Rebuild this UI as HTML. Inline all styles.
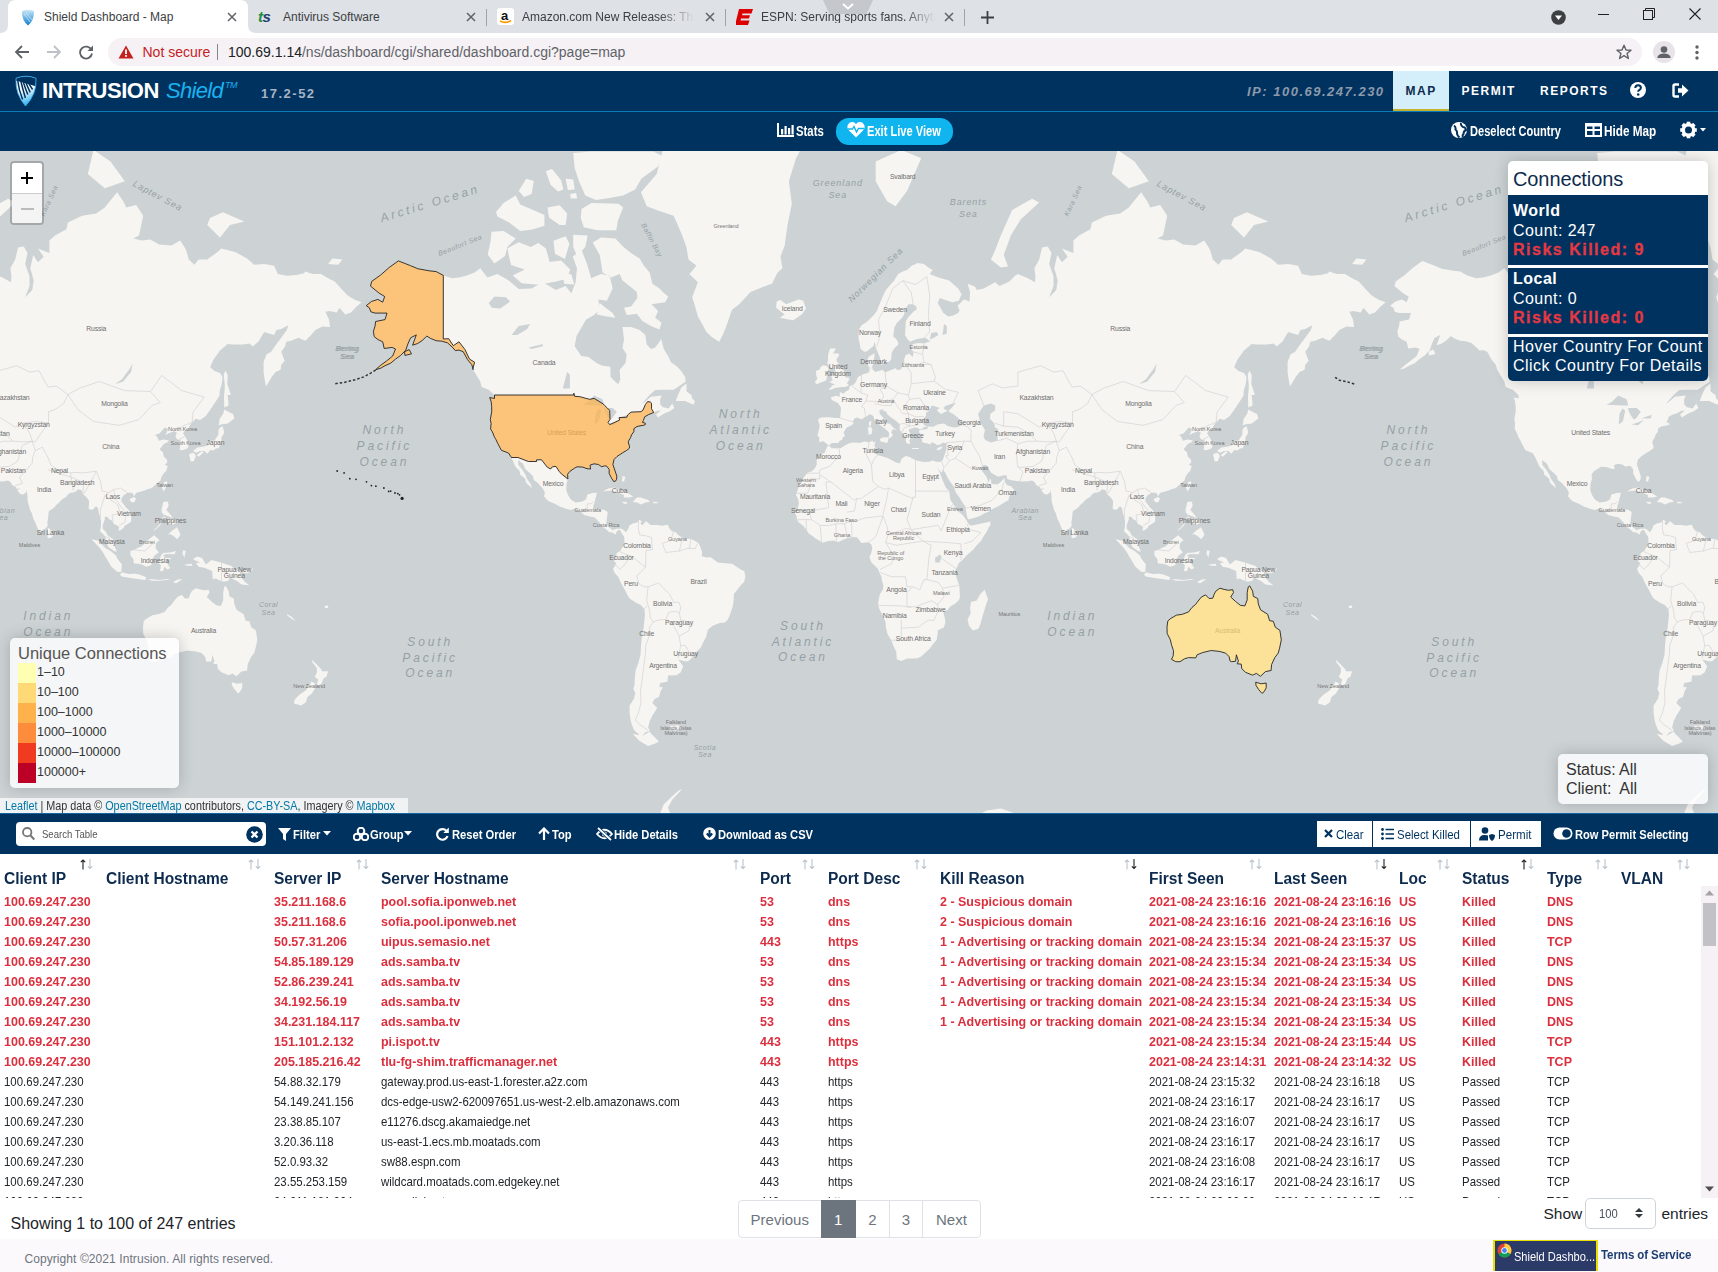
<!DOCTYPE html>
<html><head><meta charset="utf-8">
<style>
*{box-sizing:border-box;margin:0;padding:0}
html,body{width:1718px;height:1272px;overflow:hidden;background:#fff;font-family:"Liberation Sans",sans-serif}
.a{position:absolute}
.t{position:absolute;white-space:nowrap;line-height:1}
.b{font-weight:bold}
</style></head><body>
<div class="a" style="left:0px;top:0px;width:1718px;height:33px;background:#dee1e6"></div>
<svg class="a" style="left:0;top:0" width="256" height="34" viewBox="0 0 256 34"><path d="M0,33 Q8,33 8,25 L8,8 Q8,0 16,0 L240,0 Q248,0 248,8 L248,25 Q248,33 256,33 L256,34 L0,34Z" fill="#fff"/></svg>
<svg class="a" style="left:21px;top:9px;" width="14" height="17" viewBox="0 0 14 17"><defs><linearGradient id="fg" x1="0" y1="0" x2="0" y2="1"><stop offset="0" stop-color="#cfe9f7"/><stop offset="1" stop-color="#0a7fd0"/></linearGradient></defs><path d="M1,2 Q7,-0.5 13,2 Q13.5,11 7,16.5 Q0.5,11 1,2Z" fill="url(#fg)"/><path d="M3,5 Q6,8 9,13 M5,4 Q8,7 11,11" stroke="#fff" stroke-width="0.8" fill="none" opacity="0.7"/></svg>
<div class="t " style="left:44.0px;top:11.14px;font-size:12px;color:#3c4043">Shield Dashboard - Map</div>
<svg class="a" style="left:227px;top:12.3px;" width="10" height="10" viewBox="0 0 10 10"><path d="M1,1 L9,9 M9,1 L1,9" stroke="#5f6368" stroke-width="1.5"/></svg>
<div class="t b" style="left:258px;top:9px;font-size:15px;font-style:italic;letter-spacing:-0.5px"><span style="color:#1b8f3e">t</span><span style="color:#1d3d6b">s</span></div>
<div class="t " style="left:283.0px;top:11.14px;font-size:12px;color:#3c4043">Antivirus Software</div>
<svg class="a" style="left:466px;top:12.3px;" width="10" height="10" viewBox="0 0 10 10"><path d="M1,1 L9,9 M9,1 L1,9" stroke="#5f6368" stroke-width="1.5"/></svg>
<div class="a" style="left:486px;top:9px;width:1px;height:17px;background:#a0a4a8"></div>
<svg class="a" style="left:497px;top:8px;" width="17" height="17" viewBox="0 0 17 17"><rect width="17" height="17" rx="3" fill="#fff"/><text x="4" y="12" font-family="Liberation Sans" font-weight="bold" font-size="13" fill="#111">a</text><path d="M3,13 Q8.5,16 14,12.5" stroke="#f90" stroke-width="1.6" fill="none"/></svg>
<div class="t" style="left:522px;top:11.14px;font-size:12px;color:#3c4043;width:172px;overflow:hidden;-webkit-mask-image:linear-gradient(90deg,#000 80%,transparent)">Amazon.com New Releases: The Best</div>
<svg class="a" style="left:705px;top:12.3px;" width="10" height="10" viewBox="0 0 10 10"><path d="M1,1 L9,9 M9,1 L1,9" stroke="#5f6368" stroke-width="1.5"/></svg>
<div class="a" style="left:725px;top:9px;width:1px;height:17px;background:#a0a4a8"></div>
<svg class="a" style="left:736px;top:9px;" width="17" height="16" viewBox="0 0 17 16"><path d="M3,0 L17,0 L15.5,4.5 L6.5,4.5 L6,6.3 L14,6.3 L13,9.5 L5,9.5 L4.5,11.5 L13.5,11.5 L12,16 L-1,16Z" fill="#d00"/></svg>
<div class="t" style="left:761px;top:11.14px;font-size:12px;color:#3c4043;width:174px;overflow:hidden;-webkit-mask-image:linear-gradient(90deg,#000 82%,transparent)">ESPN: Serving sports fans. Anytime.</div>
<svg class="a" style="left:944px;top:12.3px;" width="10" height="10" viewBox="0 0 10 10"><path d="M1,1 L9,9 M9,1 L1,9" stroke="#5f6368" stroke-width="1.5"/></svg>
<div class="a" style="left:964px;top:9px;width:1px;height:17px;background:#a0a4a8"></div>
<svg class="a" style="left:981px;top:11px;" width="13" height="13" viewBox="0 0 13 13"><path d="M6.5,0 V13 M0,6.5 H13" stroke="#3c4043" stroke-width="1.8"/></svg>
<svg class="a" style="left:823px;top:0px;" width="50" height="14" viewBox="0 0 50 14"><path d="M0,0 L50,0 L44,13 Q43,14 41,14 L9,14 Q7,14 6,13Z" fill="#c4c7cc"/><path d="M20,4 L25,8.5 L30,4" stroke="#fff" stroke-width="1.8" fill="none"/></svg>
<svg class="a" style="left:1551px;top:10px;" width="15" height="15" viewBox="0 0 15 15"><circle cx="7.5" cy="7.5" r="7.3" fill="#3c4043"/><path d="M4,5.5 L11,5.5 L7.5,10Z" fill="#fff"/></svg>
<div class="a" style="left:1598px;top:14px;width:11px;height:1px;background:#202124"></div>
<svg class="a" style="left:1643px;top:8px;" width="12" height="12" viewBox="0 0 12 12"><rect x="0.5" y="2.5" width="9" height="9" fill="none" stroke="#202124"/><path d="M2.5,2.5 V0.5 H11.5 V9.5 H9.5" fill="none" stroke="#202124"/></svg>
<svg class="a" style="left:1689px;top:8px;" width="12" height="12" viewBox="0 0 12 12"><path d="M0.5,0.5 L11.5,11.5 M11.5,0.5 L0.5,11.5" stroke="#202124" stroke-width="1.1"/></svg>
<div class="a" style="left:0px;top:33px;width:1718px;height:38px;background:#fff"></div>
<svg class="a" style="left:14px;top:44px;" width="16" height="16" viewBox="0 0 16 16"><path d="M15,8 H2 M8,2 L2,8 L8,14" stroke="#5f6368" stroke-width="1.8" fill="none"/></svg>
<svg class="a" style="left:46px;top:44px;" width="16" height="16" viewBox="0 0 16 16"><path d="M1,8 H14 M8,2 L14,8 L8,14" stroke="#bdc1c6" stroke-width="1.8" fill="none"/></svg>
<svg class="a" style="left:78px;top:44px;" width="16" height="16" viewBox="0 0 16 16"><path d="M13.5,6 A6,6 0 1 0 14,9.5" stroke="#5f6368" stroke-width="1.8" fill="none"/><path d="M15,1.5 V7 H9.5Z" fill="#5f6368"/></svg>
<div class="a" style="left:108px;top:38px;width:1534px;height:28px;background:#f5f1f5;border-radius:14px"></div>
<svg class="a" style="left:118px;top:45px;" width="16" height="14" viewBox="0 0 16 14"><path d="M8,0.5 L15.5,13.5 H0.5Z" fill="#c5221f"/><rect x="7.1" y="4.5" width="1.8" height="4.5" fill="#fff"/><rect x="7.1" y="10" width="1.8" height="1.8" fill="#fff"/></svg>
<div class="t " style="left:142.5px;top:45.25px;font-size:14px;color:#c5221f">Not secure</div>
<div class="a" style="left:217px;top:44px;width:1px;height:16px;background:#80868b"></div>
<div class="t " style="left:228.0px;top:45.25px;font-size:14px;color:#5f6368"><span style="color:#202124">100.69.1.14</span>/ns/dashboard/cgi/shared/dashboard.cgi?page=map</div>
<svg class="a" style="left:1616px;top:44px;" width="16" height="16" viewBox="0 0 16 16"><path d="M8,1.2 L10,6 L15,6.3 L11.1,9.5 L12.4,14.5 L8,11.7 L3.6,14.5 L4.9,9.5 L1,6.3 L6,6Z" fill="none" stroke="#5f6368" stroke-width="1.4" stroke-linejoin="round"/></svg>
<svg class="a" style="left:1653px;top:41px;" width="22" height="22" viewBox="0 0 22 22"><circle cx="11" cy="11" r="11" fill="#e8e3e8"/><circle cx="11" cy="8.5" r="3.3" fill="#5f6368"/><path d="M4.5,16 Q5.5,12.5 11,12.5 Q16.5,12.5 17.5,16 L17.5,17 H4.5Z" fill="#5f6368"/></svg>
<svg class="a" style="left:1694px;top:45px;" width="6" height="15" viewBox="0 0 6 15"><circle cx="3" cy="2" r="1.7" fill="#5f6368"/><circle cx="3" cy="7.5" r="1.7" fill="#5f6368"/><circle cx="3" cy="13" r="1.7" fill="#5f6368"/></svg>
<div class="a" style="left:0px;top:71px;width:1718px;height:80px;background:#00325f"></div>
<div class="a" style="left:0px;top:111px;width:1718px;height:1px;background:#0a7ab8"></div>
<svg class="a" style="left:15px;top:75px;" width="23" height="32" viewBox="0 0 23 32"><defs><linearGradient id="lg1" x1="0" y1="0" x2="0.3" y2="1"><stop offset="0" stop-color="#fff"/><stop offset="0.55" stop-color="#f4fbff"/><stop offset="1" stop-color="#2fb0f0"/></linearGradient><clipPath id="shc"><path d="M1,3.2 Q11,-0.8 21,3.2 Q22,19 10.5,31 Q0,19 1,3.2Z"/></clipPath></defs><g clip-path="url(#shc)"><rect width="23" height="32" fill="url(#lg1)"/><path d="M0,0 H23 V12 Q14,9 0,5.5Z" fill="#00325f"/><g stroke="#00325f" stroke-width="1.5" fill="none"><path d="M2.6,5 Q4,16 7.6,24.5"/><path d="M5.8,6 Q8,15 10.4,23"/><path d="M8.3,7 Q10.5,14 12.8,19.5"/><path d="M11,7.8 Q13,13 15.2,17.3"/><path d="M14,8.6 Q15.8,12 17.6,14.5"/></g></g><path d="M1,3.2 Q11,-0.8 21,3.2 Q22,19 10.5,31 Q0,19 1,3.2Z" fill="none" stroke="#3ab4f2" stroke-width="0.9" opacity="0.9"/></svg>
<div class="t b" style="left:42.0px;top:80.38px;font-size:22px;color:#fff;letter-spacing:-0.45px">INTRUSION</div>
<div class="t " style="left:166.0px;top:80.38px;font-size:22px;color:#1ab2f0;font-style:italic;letter-spacing:-0.7px">Shield</div>
<div class="t " style="left:225.0px;top:81.38px;font-size:9px;color:#1ab2f0;font-style:italic;letter-spacing:-0.5px">TM</div>
<div class="t b" style="left:261.0px;top:87.00px;font-size:13px;color:#a8b4c3;letter-spacing:1.5px">17.2-52</div>
<div class="t b" style="left:1247.0px;top:84.50px;font-size:13px;color:#8d9aab;font-style:italic;letter-spacing:1.5px">IP: 100.69.247.230</div>
<div class="a" style="left:1393px;top:71px;width:56px;height:38px;background:#d4eefa"></div>
<div class="a" style="left:1393px;top:109px;width:56px;height:2px;background:#c7b12a"></div>
<div class="t b" style="left:1405.5px;top:84.84px;font-size:12px;color:#0d2b4e;letter-spacing:1.5px">MAP</div>
<div class="t b" style="left:1461.5px;top:84.84px;font-size:12px;color:#fff;letter-spacing:1.5px">PERMIT</div>
<div class="t b" style="left:1540.0px;top:84.84px;font-size:12px;color:#fff;letter-spacing:1.5px">REPORTS</div>
<svg class="a" style="left:1630px;top:82px;" width="16" height="16" viewBox="0 0 16 16"><circle cx="8" cy="8" r="8" fill="#fff"/><path d="M5.3,6 Q5.3,3.2 8.1,3.2 Q10.9,3.2 10.9,5.7 Q10.9,7.2 9.2,8.1 Q8.2,8.7 8.2,9.8" stroke="#00325f" stroke-width="2" fill="none"/><circle cx="8.2" cy="12.4" r="1.25" fill="#00325f"/></svg>
<svg class="a" style="left:1672px;top:83px;" width="17" height="15" viewBox="0 0 17 15"><path d="M7,1.5 H3 Q1.5,1.5 1.5,3 V12 Q1.5,13.5 3,13.5 H7" stroke="#fff" stroke-width="2.4" fill="none"/><path d="M6,5.2 H10 V1.5 L16.5,7.5 L10,13.5 V9.8 H6Z" fill="#fff"/></svg>
<svg class="a" style="left:777px;top:123px;" width="17" height="14" viewBox="0 0 17 14"><path d="M1,0 V13 H17" stroke="#fff" stroke-width="2" fill="none"/><rect x="4" y="6" width="2.2" height="5.5" fill="#fff"/><rect x="7.5" y="3" width="2.2" height="8.5" fill="#fff"/><rect x="11" y="5" width="2.2" height="6.5" fill="#fff"/><rect x="14.5" y="2" width="2.2" height="9.5" fill="#fff"/></svg>
<div class="t b" style="left:796.0px;top:123.65px;font-size:14px;transform:scaleX(0.81);transform-origin:0 0;color:#fff">Stats</div>
<div class="a" style="left:836px;top:118px;width:117px;height:26.5px;background:#10b5ef;border-radius:13px"></div>
<svg class="a" style="left:847px;top:121px;" width="18" height="17" viewBox="0 0 18 17"><path d="M9,16.5 L2,9.5 Q-0.5,7 0.8,4 Q2.5,0.5 6,1 Q8,1.3 9,3.2 Q10,1.3 12,1 Q15.5,0.5 17.2,4 Q18.5,7 16,9.5Z" fill="#fff"/><path d="M1,8 H5.5 L7,5.5 L9.5,11 L11.5,7.5 H17" stroke="#10b5ef" stroke-width="1.4" fill="none"/></svg>
<div class="t b" style="left:867.0px;top:123.65px;font-size:14px;transform:scaleX(0.794);transform-origin:0 0;color:#fff">Exit Live View</div>
<svg class="a" style="left:1451px;top:122px;" width="16" height="16" viewBox="0 0 16 16"><circle cx="8" cy="8" r="8" fill="#fff"/><path d="M3,3.5 Q5,5 4.5,7.5 Q6.5,9 6,12 Q7,14.5 8.5,15.5 M10,1 Q9.5,4 12,5 Q14.5,5 15,8 Q12.5,9 12.5,12 Q11,13.5 12,15" stroke="#00325f" stroke-width="2" fill="none"/></svg>
<div class="t b" style="left:1470.0px;top:123.65px;font-size:14px;transform:scaleX(0.79);transform-origin:0 0;color:#fff">Deselect Country</div>
<svg class="a" style="left:1585px;top:123px;" width="17" height="14" viewBox="0 0 17 14"><rect x="1" y="1" width="15" height="12" fill="none" stroke="#fff" stroke-width="2"/><path d="M1,7 H16 M8.5,1 V13" stroke="#fff" stroke-width="2"/><rect x="1" y="1" width="15" height="2.5" fill="#fff"/></svg>
<div class="t b" style="left:1604.0px;top:123.65px;font-size:14px;transform:scaleX(0.84);transform-origin:0 0;color:#fff">Hide Map</div>
<svg class="a" style="left:1680px;top:121px;" width="28" height="18" viewBox="0 0 28 18"><g transform="translate(8.5,9)"><circle r="5.2" fill="none" stroke="#fff" stroke-width="3.4"/><rect x="-1.8" y="-8.3" width="3.6" height="3.5" fill="#fff" transform="rotate(0)"/><rect x="-1.8" y="-8.3" width="3.6" height="3.5" fill="#fff" transform="rotate(45)"/><rect x="-1.8" y="-8.3" width="3.6" height="3.5" fill="#fff" transform="rotate(90)"/><rect x="-1.8" y="-8.3" width="3.6" height="3.5" fill="#fff" transform="rotate(135)"/><rect x="-1.8" y="-8.3" width="3.6" height="3.5" fill="#fff" transform="rotate(180)"/><rect x="-1.8" y="-8.3" width="3.6" height="3.5" fill="#fff" transform="rotate(225)"/><rect x="-1.8" y="-8.3" width="3.6" height="3.5" fill="#fff" transform="rotate(270)"/><rect x="-1.8" y="-8.3" width="3.6" height="3.5" fill="#fff" transform="rotate(315)"/></g><path d="M20,7 L26,7 L23,10.5Z" fill="#fff"/></svg>
<div class="a" style="left:0;top:151px;width:1718px;height:662px;overflow:hidden">
<svg width="1718" height="662" viewBox="0 0 1718 662" style="position:absolute;left:0;top:0">
<defs><path id="land" d="M366.2,154.7 371.4,150.5 377.9,148.4 382.7,151.2 384.7,145.5 378.8,141.9 370.5,135.1 371.7,130.4 380.8,123.9 389.3,116.4 398.4,109.9 410.6,114.7 417.7,117.7 429.1,119.8 436.2,120.6 443.3,124.4 451.9,127.2 459.0,126.4 466.1,124.8 474.6,121.5 480.3,117.3 487.4,126.4 497.4,123.1 508.8,129.6 518.7,138.1 531.5,137.4 542.9,131.2 555.7,138.9 565.6,135.1 571.3,142.6 575.6,131.2 577.0,117.3 572.8,105.8 581.3,98.4 587.0,112.9 591.2,127.2 601.2,123.1 609.7,124.8 612.6,137.4 606.9,149.8 598.4,148.4 599.8,158.8 594.1,164.1 586.1,168.6 581.3,176.7 576.5,185.1 574.7,195.3 581.3,205.0 588.4,206.0 596.9,212.2 602.6,214.7 610.3,215.7 610.6,225.9 614.0,229.6 618.3,233.3 620.3,228.2 619.7,218.7 625.4,212.2 626.8,203.4 622.5,196.9 624.0,188.5 622.5,176.1 631.1,176.1 639.6,179.1 645.3,183.9 646.7,193.6 651.0,198.0 655.2,196.4 659.5,190.8 661.2,188.0 663.8,198.0 668.6,206.0 670.9,211.2 676.6,215.2 680.8,219.6 685.1,225.9 685.7,230.5 681.7,233.3 673.7,238.7 663.8,238.7 655.2,239.1 649.6,244.0 645.3,248.7 641.9,252.9 645.9,250.0 651.0,245.7 661.5,244.4 660.1,248.7 660.1,253.3 662.9,256.2 668.6,257.4 672.3,252.5 674.3,257.0 670.3,259.9 663.8,262.7 657.8,266.6 656.1,263.5 660.9,259.4 656.7,259.9 653.8,261.9 648.7,263.5 644.7,265.8 643.3,269.7 642.4,271.3 645.3,272.2 645.3,273.6 643.6,274.3 641.0,274.7 637.0,275.5 633.9,277.7 633.9,280.7 631.4,284.0 630.8,286.2 629.1,289.1 628.2,290.9 629.6,295.8 629.4,297.2 626.8,299.3 622.8,301.7 619.1,304.1 617.1,305.4 614.0,308.5 612.9,313.5 615.1,320.0 616.8,325.1 616.6,328.3 615.4,330.2 613.7,330.5 611.7,327.4 609.2,322.6 609.2,318.4 606.6,315.1 604.6,314.8 601.8,315.8 598.4,313.5 594.1,312.8 590.1,314.1 590.4,317.1 590.7,318.0 587.0,317.7 582.7,316.1 577.0,315.8 574.2,317.4 569.9,320.3 567.6,323.2 567.9,328.0 566.5,333.0 566.2,339.2 567.9,343.8 570.8,348.6 575.6,351.6 582.7,350.4 586.1,348.3 587.3,343.5 592.7,342.0 596.9,341.7 596.1,345.0 594.7,350.7 593.5,354.3 592.7,358.5 599.8,358.5 604.0,358.8 607.7,361.1 606.9,367.0 606.3,372.8 608.3,375.7 612.6,378.9 616.8,377.7 621.1,377.4 624.5,379.7 625.9,381.5 628.2,377.7 629.6,374.3 633.3,372.2 636.8,371.7 639.6,368.8 641.6,370.2 640.5,372.8 642.4,374.3 645.3,371.1 645.9,369.9 650.4,374.0 656.7,374.0 662.4,374.8 668.0,373.7 668.6,376.3 671.5,380.0 675.2,380.9 679.4,384.9 683.7,387.5 690.8,388.1 695.1,390.1 698.8,392.3 700.8,397.2 702.2,401.5 701.6,404.9 706.4,406.6 710.7,406.3 717.8,411.4 724.9,412.3 732.0,412.8 735.5,415.1 740.6,418.5 744.3,420.3 745.4,425.7 744.0,430.9 740.6,434.6 736.9,439.3 733.8,443.1 733.5,450.4 732.6,455.8 729.8,463.9 727.8,468.5 724.9,471.6 719.8,471.9 712.7,474.7 707.9,478.7 706.2,485.7 703.6,490.6 700.8,496.5 696.2,501.1 692.5,506.2 688.2,510.3 684.3,510.3 678.3,508.6 681.4,512.8 683.1,515.6 680.8,521.3 676.6,524.2 668.0,524.6 667.5,530.5 660.1,532.0 659.2,535.8 662.9,536.6 660.9,539.3 658.9,545.9 654.4,547.9 652.4,552.0 657.2,557.0 652.4,564.6 649.6,570.3 648.1,576.2 649.8,579.9 645.3,581.3 641.0,586.5 638.2,582.7 633.9,579.0 631.1,571.2 629.6,562.5 629.6,554.5 633.9,547.9 635.3,542.0 633.3,538.1 634.5,534.3 634.8,526.8 635.6,519.5 638.2,512.4 640.5,503.8 641.0,495.5 641.9,485.7 643.6,477.8 644.2,471.6 645.0,463.9 644.4,457.9 641.0,454.3 635.3,451.3 629.6,447.5 627.4,443.9 624.8,438.7 621.1,432.3 618.3,425.7 614.3,421.4 613.1,417.7 615.4,414.3 616.3,412.0 614.0,410.6 616.0,405.7 616.8,402.0 620.0,400.0 622.5,396.3 624.5,392.9 624.2,385.8 622.5,383.5 619.7,378.6 616.6,380.6 615.7,383.5 612.0,381.5 608.9,380.9 606.3,378.6 603.2,376.3 600.3,374.3 600.1,372.2 596.9,368.8 594.9,366.4 589.8,365.5 584.1,364.1 579.9,360.3 575.6,357.6 570.5,359.1 565.6,357.6 560.2,355.8 554.3,352.5 549.1,350.4 547.2,348.9 544.0,345.3 544.9,341.7 543.5,338.6 541.5,336.1 537.8,332.1 533.8,328.9 532.9,325.1 529.2,321.6 525.3,318.0 523.0,312.8 518.1,309.1 518.4,314.1 522.4,318.7 525.0,322.9 527.0,327.7 529.5,331.4 530.7,333.3 531.8,337.4 530.1,335.5 525.8,331.4 525.3,327.7 520.1,323.5 519.6,320.0 515.3,315.4 512.7,309.5 511.0,305.8 508.5,302.0 505.9,301.0 501.4,299.3 497.7,292.3 496.0,288.7 494.5,286.2 492.3,280.7 490.6,278.1 491.1,272.4 490.3,268.6 491.7,260.7 491.7,255.4 491.1,250.4 489.7,246.6 494.5,247.4 494.5,244.0 488.8,238.7 481.7,236.0 480.3,230.5 476.0,223.5 473.2,218.7 471.8,213.7 467.5,208.6 463.2,200.7 459.0,199.1 455.3,199.6 453.0,196.9 447.6,191.9 441.9,190.2 436.2,189.7 430.5,187.4 426.8,185.1 422.0,189.7 417.7,192.5 412.6,194.2 416.3,183.9 410.6,186.8 407.8,193.1 405.8,199.1 400.7,204.4 395.5,208.1 390.7,212.2 385.0,214.7 380.8,217.2 375.6,218.7 380.8,214.2 386.4,210.1 392.7,205.0 395.5,198.0 392.1,196.4 384.2,197.5 382.7,190.8 377.9,188.5 374.2,185.6 373.4,180.3 375.1,174.9 375.6,170.5 385.0,168.6 387.0,162.1 382.2,162.1 375.1,162.1 370.8,160.8 369.4,156.8ZM659.5,178.5 661.5,171.8 655.2,166.7 658.1,160.1 651.5,153.3 665.2,151.2 668.3,145.5 663.8,141.9 659.5,137.4 652.4,132.7 649.6,121.5 643.9,114.7 639.6,107.6 631.1,102.1 624.0,96.5 615.4,87.6 601.2,86.6 592.7,91.6 599.8,104.0 602.6,121.5 611.2,126.4 619.7,123.1 622.5,129.6 629.6,135.1 636.8,141.1 637.3,147.0 631.1,155.4 624.0,156.8 626.8,164.1 636.8,162.8 642.4,169.9 651.0,174.9ZM622.5,325.1 625.4,326.1 624.0,330.8 622.0,330.2ZM602.9,340.4 608.3,337.4 614.0,336.4 621.1,338.9 628.2,342.6 633.3,345.6 629.6,346.5 623.7,346.5 624.0,344.1 618.3,341.7 611.7,339.5 606.9,340.1ZM670.0,574.8 679.4,574.4 680.3,577.1 675.2,579.4 670.9,578.1ZM719.2,190.8 712.1,186.2 706.4,180.9 702.2,173.0 697.9,165.4 695.1,155.4 692.2,146.2 697.9,131.2 689.4,123.1 696.5,114.7 688.5,108.5 686.5,96.5 682.3,84.5 673.7,64.8 659.5,60.1 646.7,55.3 641.0,41.2 656.7,22.9 665.2,-10.0 688.0,-35.5 730.6,-63.2 773.3,-58.2 793.2,-29.3 810.3,-19.3 796.0,7.3 788.9,30.2 791.8,52.8 787.5,73.9 784.7,94.5 780.4,105.8 782.4,117.3 777.6,121.5 771.9,132.7 759.1,137.4 750.5,141.1 739.2,153.3 732.0,158.8 729.2,166.7 726.4,174.9 722.7,183.9ZM632.8,351.0 636.8,346.5 641.0,346.5 648.1,348.9 649.8,350.7 645.3,351.6 641.0,353.4 637.3,351.6ZM621.7,351.0 625.9,350.7 627.7,352.2 624.8,353.1ZM574.2,133.5 564.2,132.7 562.8,123.9 571.3,123.1ZM404.9,204.4 411.5,202.9 409.2,198.6 404.6,200.7ZM675.7,250.0 685.1,250.0 693.6,253.7 694.8,250.0 692.2,247.4 691.4,244.0 686.5,240.5 686.5,232.4 681.4,236.5 678.0,244.0ZM653.3,350.7 657.8,351.0 657.2,352.2 653.3,352.2ZM615.4,166.7 606.9,165.4 596.9,163.4 599.8,151.9 604.0,155.4 612.6,162.1ZM649.3,580.8 658.9,590.4 655.2,592.4 648.1,594.9 639.6,589.9 632.5,582.7 642.4,585.1ZM827.6,295.1 826.2,297.9 824.8,301.4 822.5,302.7 819.9,304.1 817.9,306.5 816.5,310.1 816.8,313.5 815.1,317.1 811.7,320.6 807.7,321.6 803.7,326.4 802.0,330.8 799.2,334.9 797.5,339.2 795.9,343.8 798.0,347.7 798.9,351.9 797.5,358.2 796.6,361.1 794.6,362.0 796.6,364.7 796.9,368.8 798.9,371.4 801.7,373.4 804.6,376.3 806.6,379.2 808.8,382.6 811.7,384.6 816.0,387.8 822.8,391.8 827.3,390.3 833.0,389.5 838.4,390.9 843.8,388.6 847.8,386.9 851.5,386.3 854.1,386.1 857.2,386.6 860.0,390.1 861.5,392.1 865.7,391.5 868.6,391.2 871.4,393.5 872.3,397.2 871.4,401.5 869.4,406.0 871.4,411.4 875.7,415.4 878.0,418.0 879.4,421.4 881.4,425.7 881.9,429.4 883.4,434.3 882.8,438.7 880.0,443.1 878.8,448.1 878.0,454.3 880.0,459.4 882.8,463.9 885.6,471.2 885.9,476.2 887.4,482.8 891.3,489.3 893.6,495.5 896.2,500.5 896.7,506.9 897.0,508.6 901.3,510.0 907.0,507.6 912.7,507.6 917.2,507.2 921.2,505.5 925.5,501.5 929.7,497.8 932.6,493.5 936.6,488.9 937.7,482.5 937.7,479.4 944.0,476.2 945.4,471.6 944.8,466.9 943.4,461.8 947.7,458.8 950.5,455.2 955.3,452.5 959.0,448.9 959.9,446.0 959.6,440.1 959.3,434.3 957.6,430.0 956.2,425.7 956.2,423.7 955.0,420.0 957.3,415.7 958.7,412.3 962.4,409.1 965.3,405.7 968.1,402.9 973.3,398.6 976.7,394.3 980.9,390.1 983.8,384.9 987.2,380.0 988.9,375.7 990.3,374.6 990.3,370.5 986.6,371.4 982.4,372.2 976.7,373.4 972.4,374.6 969.6,374.3 967.6,371.4 967.3,370.8 965.9,368.5 963.9,365.5 961.0,362.6 956.8,359.4 953.9,353.7 950.8,349.8 950.2,347.4 949.6,343.2 949.1,340.1 945.7,336.4 944.0,332.4 942.0,327.7 940.5,323.5 937.1,315.1 936.3,310.8 932.6,309.5 929.4,310.8 924.0,311.1 916.1,309.5 912.7,307.8 909.8,306.1 905.6,305.1 901.6,307.8 899.9,312.5 896.2,311.5 892.8,309.8 887.6,307.1 882.8,305.4 877.1,304.1 874.3,302.0 873.4,299.6 875.7,297.2 874.3,294.4 875.7,290.5 873.4,291.6 872.6,289.8 868.6,291.2 864.3,290.5 860.0,291.9 852.9,291.6 848.7,292.6 844.4,294.8 841.0,296.9 838.1,297.6 834.4,297.2 831.6,297.2 829.3,294.8ZM682.3,638.1 678.0,640.0 670.9,646.5 663.8,653.2 658.1,667.5 653.8,687.1 690.8,687.1 673.7,671.2 668.0,656.7 672.3,648.5ZM1249.7,434.9 1252.6,440.1 1253.4,445.4 1257.7,447.5 1258.3,452.8 1260.5,458.8 1267.7,463.3 1269.6,469.7 1273.3,470.3 1275.3,476.2 1279.9,479.4 1281.3,488.9 1279.6,497.1 1278.2,502.1 1274.8,506.6 1271.6,513.5 1271.1,519.5 1265.4,520.6 1260.5,525.3 1256.3,522.4 1252.6,524.2 1245.5,521.3 1241.8,517.7 1241.2,513.1 1237.2,512.8 1238.4,510.0 1236.4,503.8 1235.5,510.3 1231.2,510.7 1230.1,510.0 1229.0,505.5 1225.6,502.1 1219.9,500.5 1211.3,499.5 1202.8,501.5 1197.1,503.8 1195.7,506.9 1188.6,506.6 1184.3,507.9 1180.0,510.7 1175.8,510.7 1171.5,508.3 1173.2,504.9 1173.5,499.8 1171.5,493.8 1170.4,488.9 1167.2,482.5 1167.0,476.2 1167.8,470.0 1170.1,467.9 1176.3,464.2 1182.3,463.3 1188.6,460.9 1192.0,456.4 1195.7,453.4 1197.1,451.3 1201.4,446.0 1205.6,443.9 1209.1,447.5 1212.8,447.2 1214.2,443.1 1215.9,440.1 1219.9,437.2 1224.1,438.4 1228.4,439.3 1232.7,438.7 1233.5,441.6 1230.7,446.0 1235.5,450.4 1240.3,454.3 1244.9,454.9 1247.2,448.9 1247.2,441.6 1248.3,435.8ZM1154.4,400.0 1157.3,399.2 1161.6,396.9 1165.8,395.2 1170.1,390.9 1174.4,387.2 1178.1,384.3 1183.5,389.2 1180.0,392.1 1179.5,397.2 1182.9,401.5 1179.2,403.7 1176.1,408.6 1175.2,414.3 1170.1,415.7 1165.8,413.4 1162.1,412.8 1157.9,412.6 1157.3,408.0 1154.4,404.3ZM868.9,274.7 870.9,274.7 871.4,269.7 868.9,271.3ZM911.2,296.9 919.2,296.9 918.4,297.9 912.7,297.9ZM936.3,298.6 938.3,296.5 942.8,295.5 941.1,297.9 938.3,299.3ZM828.5,294.4 826.5,292.6 823.4,290.2 819.1,290.9 819.4,286.6 817.4,284.7 819.1,278.1 819.7,274.3 817.9,268.6 820.8,266.6 828.2,266.2 835.9,267.0 840.1,267.0 840.7,261.5 841.0,256.6 837.9,252.1 831.9,249.1 830.7,246.6 835.9,244.8 839.8,245.7 839.8,240.9 843.8,242.7 845.0,240.9 849.0,238.7 849.8,235.1 853.5,233.8 855.8,231.0 858.1,225.9 861.5,224.0 865.7,222.5 868.9,221.6 869.7,218.7 868.0,213.7 867.7,208.1 868.9,205.5 874.6,202.3 874.3,206.0 873.7,209.6 875.1,210.1 872.8,213.7 872.0,216.2 872.8,218.7 875.4,221.1 878.8,220.1 882.8,219.1 885.1,221.6 889.9,219.6 895.6,217.2 897.3,219.1 900.4,218.7 904.4,213.2 904.1,208.6 905.6,203.9 908.7,202.3 912.7,206.0 913.5,201.8 911.2,197.5 911.2,194.2 914.7,192.5 919.8,191.9 924.0,192.5 930.3,190.2 925.5,186.8 919.8,187.4 915.5,188.5 909.8,190.8 907.0,187.4 905.0,183.9 905.6,174.9 905.6,170.5 908.4,166.0 914.1,160.1 916.6,158.8 916.4,155.4 913.2,153.3 908.4,153.3 905.0,158.8 904.1,163.4 902.1,166.7 897.0,171.8 894.5,176.1 893.6,182.1 893.3,185.6 896.2,188.0 898.4,191.9 898.2,193.6 894.2,197.5 891.6,201.8 891.3,208.1 889.3,210.7 885.6,211.2 881.4,214.2 881.1,211.2 880.0,207.1 878.2,202.3 876.5,198.6 875.7,195.3 874.6,190.8 873.4,195.3 870.9,196.9 867.2,200.2 864.3,200.7 860.3,197.5 860.0,193.6 858.6,188.0 858.6,182.7 859.2,177.9 861.5,174.3 865.7,171.8 869.4,168.6 874.3,163.4 877.1,159.5 880.0,151.9 882.8,145.5 885.6,139.6 889.9,134.3 894.2,129.6 898.2,123.1 902.7,120.6 907.0,119.0 911.8,114.7 917.8,112.1 924.0,112.9 928.3,116.4 932.6,119.0 929.7,123.1 938.3,126.4 949.1,129.6 958.2,137.4 961.6,143.3 958.7,149.8 952.5,151.2 945.4,149.1 939.7,147.0 937.7,151.9 943.4,162.1 948.2,165.4 952.5,164.7 958.2,162.1 959.6,159.5 957.6,154.7 963.9,148.4 969.6,150.5 970.1,141.1 967.6,132.7 975.2,135.8 976.7,138.9 983.8,137.4 995.2,131.2 999.4,135.1 1009.4,130.4 1015.1,124.8 1017.9,123.1 1027.9,127.2 1035.0,131.2 1035.5,125.6 1034.4,117.3 1039.2,108.5 1042.1,96.5 1047.8,95.5 1051.5,102.1 1049.2,112.9 1053.5,125.6 1053.5,135.1 1049.2,146.2 1056.3,138.9 1057.7,129.6 1054.3,117.3 1057.2,104.0 1062.0,111.2 1067.7,105.8 1062.0,97.4 1073.4,102.1 1073.4,89.6 1079.1,84.5 1090.4,78.2 1091.9,71.6 1106.1,64.8 1120.3,62.5 1128.8,56.5 1141.1,41.2 1147.3,50.3 1150.2,56.5 1160.1,54.1 1167.2,64.8 1163.0,84.5 1157.3,87.6 1165.8,89.6 1174.4,88.6 1182.9,93.5 1195.7,94.5 1204.2,89.6 1209.9,98.4 1212.8,108.5 1218.4,113.8 1222.7,108.5 1231.2,108.5 1241.2,101.2 1245.5,97.4 1259.7,101.2 1271.1,107.6 1278.2,113.8 1288.1,112.9 1298.1,114.7 1301.8,123.1 1310.9,124.8 1320.8,123.9 1328.0,122.3 1329.4,120.6 1336.5,123.1 1345.0,123.1 1352.1,127.2 1358.7,130.4 1367.8,140.4 1372.0,144.8 1379.2,149.1 1385.7,151.2 1380.6,155.4 1374.9,161.5 1369.2,163.4 1363.5,156.8 1360.7,161.5 1353.6,160.1 1349.3,160.8 1353.0,168.6 1354.1,176.1 1346.4,175.5 1339.3,179.1 1335.1,183.9 1329.4,189.7 1322.3,186.8 1315.2,189.7 1310.3,190.8 1308.9,195.8 1305.2,200.7 1308.6,210.1 1305.2,213.7 1304.6,218.7 1299.5,221.1 1295.5,226.3 1292.4,231.5 1290.1,235.6 1289.0,230.5 1287.6,221.1 1287.6,211.2 1290.4,203.4 1295.2,200.7 1300.9,192.5 1305.2,186.8 1310.9,179.1 1312.3,174.3 1305.2,177.9 1300.4,179.1 1298.1,183.9 1288.1,180.9 1282.4,190.8 1276.8,195.3 1273.3,192.5 1266.8,193.6 1256.8,193.6 1251.7,193.1 1244.0,199.6 1237.5,208.6 1234.1,216.2 1238.4,220.1 1244.0,222.1 1246.6,226.3 1245.8,232.8 1243.8,239.6 1243.5,244.8 1238.4,252.5 1234.9,257.8 1229.8,265.0 1224.1,269.0 1219.9,267.8 1216.2,271.3 1213.6,274.3 1212.8,277.0 1208.5,280.0 1207.1,282.6 1209.9,286.6 1212.5,292.6 1212.2,296.2 1211.3,297.6 1207.1,298.9 1203.7,299.3 1204.2,295.8 1203.4,291.6 1204.8,288.7 1201.4,288.4 1199.4,285.8 1200.8,281.8 1198.0,280.3 1192.0,282.6 1189.4,284.4 1190.9,280.7 1192.3,278.1 1188.6,276.6 1185.7,280.0 1183.5,282.6 1179.2,283.7 1181.5,286.6 1182.9,289.8 1187.7,288.4 1193.1,289.4 1191.4,291.2 1187.7,293.0 1186.6,294.4 1183.5,298.6 1186.6,300.7 1188.0,306.1 1191.1,308.8 1191.1,311.8 1188.6,313.5 1191.7,315.1 1190.3,319.7 1188.0,321.9 1185.4,326.1 1184.6,329.2 1181.5,332.1 1178.6,334.6 1175.8,337.0 1171.5,338.3 1169.2,339.2 1167.0,340.1 1163.0,341.0 1160.1,342.0 1157.9,345.3 1156.7,342.3 1154.7,341.7 1151.6,341.7 1147.9,344.1 1145.9,346.8 1145.1,349.8 1147.3,353.1 1150.2,356.7 1152.5,358.8 1154.4,362.6 1155.3,367.0 1155.0,370.8 1152.2,372.8 1148.8,374.6 1147.6,376.9 1143.6,379.7 1142.5,379.5 1143.1,376.0 1140.8,374.3 1137.9,373.1 1136.0,369.6 1133.1,368.2 1131.4,365.8 1128.8,365.8 1128.8,368.5 1126.6,374.3 1126.9,378.0 1129.7,380.6 1131.7,384.6 1134.8,386.6 1137.4,388.6 1138.5,391.8 1138.8,396.3 1140.8,400.3 1138.8,400.6 1136.0,398.6 1132.5,396.3 1131.1,392.9 1130.0,389.2 1129.4,385.8 1126.0,382.0 1124.0,380.6 1124.9,375.7 1125.1,370.5 1124.3,367.0 1122.9,361.7 1122.0,357.0 1120.0,355.2 1116.9,358.5 1114.6,358.8 1112.6,357.6 1113.2,350.7 1111.8,347.7 1109.5,345.3 1106.9,343.2 1105.5,339.2 1102.1,338.3 1099.8,340.4 1097.6,341.4 1095.3,341.4 1091.9,343.2 1090.7,345.6 1086.2,348.3 1083.3,351.3 1080.5,353.7 1078.2,356.4 1075.4,358.5 1072.8,360.3 1072.2,365.5 1071.4,371.4 1071.7,374.8 1069.1,377.7 1066.8,378.9 1064.8,381.2 1062.3,378.9 1061.1,376.0 1059.4,371.4 1057.2,367.3 1056.0,362.6 1054.3,359.4 1052.6,353.7 1051.5,349.2 1051.5,344.7 1050.9,341.7 1050.6,339.2 1049.8,341.7 1046.4,343.8 1043.5,342.3 1041.2,339.2 1044.4,337.4 1040.7,337.7 1039.2,335.5 1036.1,333.9 1035.0,331.4 1032.1,329.6 1027.9,330.2 1021.6,330.5 1016.5,329.9 1011.9,329.2 1007.4,328.3 1006.5,324.5 1004.5,324.2 1000.8,325.1 998.0,325.8 993.7,323.2 990.9,321.6 988.9,318.0 986.6,314.4 983.8,313.8 982.6,315.1 980.9,316.4 981.8,319.7 984.9,323.8 986.9,326.4 988.0,330.2 988.9,331.8 990.0,327.4 991.2,329.2 991.2,332.4 993.7,333.3 998.0,333.3 1001.7,329.9 1004.0,327.4 1004.5,326.4 1004.8,331.1 1007.1,334.3 1011.1,335.2 1013.6,338.3 1014.5,338.9 1011.7,343.2 1009.4,344.7 1008.5,349.2 1005.4,350.7 1002.3,352.8 998.3,355.2 993.7,357.3 989.5,360.3 984.1,362.6 979.5,365.2 973.8,367.0 969.6,368.2 967.8,367.9 966.7,364.1 965.9,359.7 965.6,355.8 963.3,352.8 959.6,346.8 955.9,341.7 953.9,335.5 951.1,332.1 948.2,327.7 945.4,321.9 943.4,319.3 944.0,316.4 942.8,318.0 942.0,321.9 939.7,319.7 937.1,315.1 936.3,310.8 939.7,311.1 942.2,309.8 943.7,306.5 944.2,304.4 945.4,301.7 946.5,297.2 946.2,293.4 947.4,291.9 945.4,292.3 942.8,291.6 939.7,293.7 936.8,294.1 934.0,291.9 931.4,291.2 930.6,293.4 926.9,292.3 924.3,291.9 922.3,290.9 921.8,287.6 919.5,286.2 920.6,284.7 920.3,281.8 918.9,281.8 919.2,279.6 921.8,278.5 926.3,278.5 927.7,277.0 927.5,275.5 933.1,275.8 938.3,273.2 944.2,272.4 947.7,275.1 952.5,276.2 957.3,276.2 962.7,274.0 962.4,270.5 959.0,267.8 957.3,266.2 953.3,263.1 951.1,261.9 948.5,259.9 951.9,256.6 955.9,252.1 952.5,252.5 945.4,255.0 943.4,257.0 945.4,259.0 947.9,259.4 944.8,261.1 941.7,262.7 939.7,262.3 936.8,259.0 940.0,257.0 935.4,255.4 932.0,254.5 930.3,257.0 928.9,259.9 926.3,261.5 925.8,265.0 923.8,267.8 922.6,270.9 924.0,274.0 927.2,275.5 924.0,276.2 921.8,277.7 919.8,278.5 918.9,277.7 918.4,277.0 914.1,276.6 912.1,277.4 909.5,277.7 908.7,280.0 910.7,282.9 909.5,285.5 912.7,286.6 910.4,287.6 909.3,289.8 910.4,292.6 908.1,293.0 906.1,291.6 905.6,288.4 906.1,286.2 904.1,284.4 901.9,281.4 899.6,278.5 899.9,273.2 897.3,270.9 894.2,268.6 891.0,266.6 887.6,263.5 885.6,259.9 883.1,260.3 883.7,258.2 879.4,259.0 879.7,262.7 883.1,266.6 885.1,270.9 887.9,272.8 889.9,272.8 893.0,276.2 897.0,279.6 892.8,278.1 891.3,281.4 893.0,284.0 890.2,287.3 888.8,286.6 889.1,281.8 886.8,279.2 884.2,277.0 881.4,275.1 879.1,273.2 876.3,270.5 874.3,268.6 873.4,265.0 869.7,263.1 867.2,265.0 865.2,265.8 862.0,268.2 859.5,267.4 857.2,266.6 854.4,267.4 852.9,270.5 853.5,272.8 850.7,274.7 847.2,276.2 845.8,277.7 843.5,281.8 845.0,284.7 843.0,286.2 842.1,288.7 839.8,289.8 838.1,291.9 834.4,291.9 831.9,291.9 829.3,294.1ZM1348.7,454.9 1352.1,454.6 1352.1,457.0 1349.0,457.0ZM1171.5,428.3 1177.2,428.3 1182.9,428.9 1191.4,428.0 1194.3,428.6 1184.3,429.7 1175.8,429.7ZM848.4,234.7 848.4,233.3 846.7,232.4 849.2,228.7 849.0,226.8 845.3,226.3 844.7,223.5 844.1,220.6 842.7,218.7 840.4,216.2 839.8,213.2 837.3,211.2 836.4,208.6 838.7,205.0 839.3,202.9 835.9,202.3 833.0,202.9 835.9,197.5 830.2,197.5 829.0,200.7 827.9,204.4 828.2,208.6 827.3,212.2 828.5,214.7 830.7,216.2 830.2,217.7 834.4,216.7 835.0,219.6 836.2,222.1 835.9,224.4 831.3,224.4 831.6,226.8 832.7,229.2 829.3,231.0 832.5,232.4 835.3,233.3 832.5,234.2 830.2,236.9 828.2,239.1 832.7,238.3 834.7,236.9 838.7,236.5 841.3,236.0 845.3,236.0 847.2,235.1ZM1153.3,348.6 1157.6,345.9 1160.1,347.4 1158.7,350.7 1155.9,351.6ZM1207.1,399.2 1209.9,400.0 1209.1,402.9 1208.5,406.6 1206.5,402.9ZM1242.6,274.3 1246.0,273.2 1251.7,272.4 1258.3,267.4 1257.4,263.5 1248.3,258.6 1247.2,262.7 1243.8,267.8ZM1217.0,300.0 1221.3,296.5 1227.0,295.8 1231.2,294.8 1233.5,289.8 1238.4,289.8 1242.3,283.7 1242.6,278.1 1246.6,275.1 1248.3,281.8 1245.5,286.2 1245.2,291.2 1242.6,297.6 1240.3,297.2 1237.5,299.3 1234.1,299.3 1231.2,302.7 1228.7,300.3 1224.1,300.0 1220.4,301.7ZM779.8,166.7 784.7,163.4 776.1,156.8 776.7,150.5 780.4,149.1 786.1,153.3 793.2,150.5 798.9,148.4 803.2,149.8 806.0,157.4 801.7,163.4 793.2,169.2 786.1,168.0ZM827.3,215.2 823.4,214.2 820.8,215.7 819.9,218.2 816.0,220.1 816.2,224.0 817.4,227.8 814.8,231.0 816.5,233.3 820.8,231.5 826.2,229.6 827.3,224.4 826.5,221.1 828.8,218.7ZM1143.9,423.7 1145.9,421.4 1153.0,423.1 1159.6,422.8 1164.7,424.0 1170.1,426.3 1169.5,428.9 1160.1,427.7 1151.6,426.6 1145.9,425.4ZM1213.3,303.1 1217.6,301.7 1219.9,304.8 1217.9,310.1 1214.7,310.8 1213.6,305.8ZM1185.7,358.2 1187.4,350.7 1192.0,350.7 1192.6,355.2 1190.3,358.8 1197.1,367.0 1192.8,365.5 1187.4,363.5 1185.7,361.1ZM984.6,438.7 988.0,448.3 986.1,453.4 982.9,463.9 980.4,473.1 978.4,477.8 973.0,479.4 969.0,474.7 967.6,468.2 970.7,462.4 970.1,456.4 971.0,451.0 976.7,449.5 980.4,443.1ZM1191.4,384.3 1195.7,380.0 1201.1,376.3 1204.5,383.5 1202.8,386.3 1201.1,388.3 1197.1,384.6 1193.7,382.9ZM1186.6,365.5 1190.0,366.7 1189.4,369.3 1187.2,368.2ZM1266.8,420.0 1273.9,418.5 1277.6,416.3 1275.3,420.3 1271.1,422.3 1266.2,421.4ZM1310.9,463.0 1315.2,465.4 1319.4,469.4 1316.6,468.5 1311.5,464.8ZM1217.0,408.0 1221.3,405.4 1226.1,406.9 1229.8,413.4 1235.5,408.9 1245.5,411.7 1255.4,415.1 1259.1,418.5 1264.0,421.4 1265.4,427.1 1269.6,431.4 1273.3,434.3 1265.4,433.5 1261.1,430.0 1254.0,426.6 1252.0,430.0 1248.3,430.6 1245.5,430.3 1239.8,427.4 1236.9,428.3 1236.1,420.0 1228.4,416.8 1222.7,415.7 1219.9,412.3 1224.1,411.4 1218.4,408.9ZM990.9,108.5 1000.8,116.4 1008.0,115.5 1003.7,104.0 1010.8,84.5 1020.8,68.3 1039.2,51.6 1032.1,47.8 1012.2,58.9 1000.8,84.5 995.2,99.3ZM1231.2,73.9 1244.0,86.6 1254.0,73.9 1268.2,70.5 1246.9,61.3 1234.1,67.1ZM1335.6,508.6 1340.8,513.5 1344.7,517.7 1346.4,520.6 1352.1,520.2 1350.4,525.7 1347.6,527.2 1345.6,532.4 1342.7,534.6 1341.0,533.1 1342.2,528.6 1338.8,525.7 1341.0,521.3 1340.8,517.0 1336.5,511.4ZM1335.4,530.5 1339.9,533.1 1339.0,537.3 1335.9,542.4 1331.4,545.9 1329.7,551.6 1325.1,554.5 1318.0,552.4 1318.6,548.7 1323.1,544.0 1329.7,539.6 1333.6,534.3ZM1177.8,380.3 1184.3,374.3 1184.9,371.9 1178.6,378.6ZM1248.3,256.6 1252.6,254.5 1251.7,244.0 1254.9,244.0 1251.2,232.8 1251.7,224.4 1249.7,219.6 1247.7,223.5 1248.9,235.1 1248.0,246.1ZM867.7,276.6 870.6,275.5 872.3,278.1 871.7,282.9 868.6,283.7 868.3,280.0ZM1208.5,413.4 1215.6,412.8 1216.5,415.1 1209.9,414.5ZM1111.8,22.9 1128.8,37.2 1148.8,30.2 1134.5,10.5 1117.5,-1.1ZM1221.0,304.1 1225.6,300.3 1227.5,301.4 1222.7,305.8ZM879.7,288.0 882.8,286.6 888.8,286.2 887.4,291.9 880.8,290.5ZM1071.4,386.1 1072.0,380.3 1071.7,376.3 1075.7,380.0 1077.4,383.8 1075.7,386.6 1072.5,387.2ZM1184.0,420.0 1184.9,414.3 1182.3,412.3 1185.2,404.3 1187.2,402.0 1194.3,401.5 1200.0,400.0 1198.5,403.2 1190.0,402.9 1187.2,404.3 1188.6,407.1 1195.7,407.1 1190.0,410.0 1191.4,412.8 1194.3,417.1 1191.4,418.5 1188.6,415.7 1186.9,420.3ZM1115.5,388.3 1121.7,389.5 1129.7,397.2 1134.5,400.0 1139.7,404.3 1141.9,408.6 1145.9,413.4 1145.3,420.8 1141.6,421.1 1135.4,415.7 1131.1,408.6 1126.0,400.0 1123.2,396.3ZM875.7,30.2 887.1,50.3 895.6,55.3 907.0,39.9 921.2,7.3 901.3,-1.1 875.7,10.5ZM1186.0,337.0 1188.6,330.5 1191.4,330.8 1190.0,336.1 1188.0,340.4ZM1255.7,531.2 1261.1,532.8 1266.2,532.0 1266.2,536.9 1264.0,540.8 1262.0,542.4 1258.3,538.1 1256.0,534.3ZM1197.1,430.9 1201.4,428.6 1206.5,428.3 1200.0,432.3ZM1191.4,370.8 1195.7,374.3 1200.0,371.9 1201.4,368.5 1197.1,368.2 1192.3,369.3ZM1352.1,112.9 1362.1,113.8 1366.4,108.5 1356.4,107.6ZM573.2,2.0 591.4,0.5 653.4,0.5 662.5,5.1 658.0,15.6 641.3,27.8 635.2,38.4 623.1,44.4 606.5,47.4 595.9,48.9 585.3,44.4 579.2,30.8 574.7,17.2ZM545.9,20.2 552.0,17.9 561.1,29.3 563.4,38.4 558.1,40.6 550.5,33.8ZM518.7,39.9 526.3,27.8 533.8,30.0 531.6,42.9 524.0,45.9ZM496.0,61.1 503.6,52.0 515.7,44.4 520.2,53.5 530.8,58.0 544.4,64.1 544.4,74.7 532.3,78.5 520.2,80.0 509.6,71.7 497.5,65.6ZM547.5,56.5 559.6,54.2 567.1,62.6 565.6,73.9 559.6,73.9 549.0,66.4ZM581.5,58.0 591.4,52.0 618.6,52.7 623.1,56.5 617.8,70.1 616.3,79.2 597.4,79.2 583.8,76.2 580.8,67.1ZM565.6,27.8 573.2,28.5 574.7,38.4 567.9,39.1ZM570.2,42.9 576.2,42.1 577.0,47.4 570.9,47.4ZM491.5,80.7 503.6,80.0 515.7,87.5 507.4,95.9 505.1,104.9 494.5,112.5 487.7,103.4 490.7,89.8ZM507.4,97.4 518.7,91.3 530.8,95.9 538.4,92.1 545.9,97.4 549.7,111.0 561.1,109.5 570.2,118.6 567.1,127.7 555.0,130.7 538.4,133.7 521.7,132.2 512.7,124.6 524.8,118.6 511.1,114.0 508.9,104.9ZM553.5,89.8 565.6,85.3 569.4,92.8 564.9,108.0 555.0,102.7ZM573.2,83.8 587.6,84.5 585.3,95.9 577.0,104.9 573.2,95.9Z"/><path id="casp" d="M978.1,262.7 983.8,254.5 990.9,252.5 995.2,254.5 995.2,259.4 990.3,262.7 990.0,267.8 994.3,272.4 994.9,276.2 998.0,278.1 997.4,283.7 997.7,289.8 990.9,291.6 985.2,289.1 983.5,285.5 984.9,278.8 980.9,272.4 979.5,268.6ZM488.8,151.9 494.5,145.5 505.9,146.2 510.2,150.5 500.2,157.4 491.7,156.8ZM511.6,183.9 518.7,174.9 530.1,173.0 527.2,177.9 517.3,183.9ZM528.7,196.4 542.9,193.1 542.9,195.3 531.5,198.0ZM562.8,237.4 567.1,221.1 569.9,223.5 569.9,237.4ZM582.4,253.7 588.4,250.4 594.1,244.4 602.6,248.3 604.3,254.5 598.4,254.5 588.4,254.1ZM594.7,273.6 595.5,262.7 598.4,257.4 601.2,259.4 598.9,270.5ZM604.0,257.0 612.6,257.0 616.8,260.7 612.0,267.4 609.7,268.6 606.9,264.6 604.6,259.9ZM607.5,273.6 614.0,271.3 620.0,269.0 614.0,274.3ZM617.4,267.4 625.4,264.6 627.7,263.9 626.8,267.4ZM1139.7,232.8 1145.9,228.2 1153.0,218.7 1156.7,212.2 1155.0,221.1 1147.3,230.5 1141.6,232.4ZM934.9,407.1 939.7,403.4 941.7,405.4 939.7,411.4 935.4,411.4ZM929.7,188.5 934.0,186.8 938.3,183.9 936.8,180.9 931.2,182.1ZM942.5,183.9 946.8,182.7 946.8,174.9 944.0,173.0Z"/></defs>
<rect width="1718" height="662" fill="#cdd3d5"/><defs><path id="ant" d="M332.4,667.5 503.1,719.0 560.0,709.3 616.8,709.3 653.8,687.1 690.8,687.1 730.6,714.1 787.5,695.7 844.4,685.5 901.3,685.5 952.5,679.0 972.4,667.5 986.6,659.5 1000.8,657.4 1015.1,662.4 1043.5,671.2 1072.0,667.5 1100.4,663.8 1356.4,667.5 1356.4,914.6 332.4,914.6Z"/></defs>
<g fill="#f7f5f2">
<use href="#land" x="-1024"/><use href="#land"/><use href="#land" x="1024"/><use href="#ant" x="-1024"/><use href="#ant"/><use href="#ant" x="1024"/>
</g>
<defs><path id="bord" d="M582.1,362.6 582.1,360.3 585.0,357.9 587.3,357.9 587.3,352.8 591.0,352.8 593.2,350.7M638.7,370.2 638.2,376.9 639.6,383.8 645.3,384.6 651.5,386.6 652.4,398.6 645.9,399.5 645.6,416.3M619.7,400.3 624.0,402.6 630.2,404.6 635.3,408.0 645.3,416.3M616.0,414.0 619.7,418.5 625.4,412.8 630.2,404.6M673.7,380.0 670.9,389.5 662.4,392.3 665.8,401.5 673.7,400.6 679.4,400.0 688.0,397.2 695.1,397.8 697.6,392.3M682.3,387.2 679.4,400.0M690.8,388.1 689.4,397.8M645.3,416.3 636.8,425.1 639.0,432.9 643.6,435.8 648.1,435.8 658.4,432.0 669.5,443.1 673.7,451.3 678.9,451.3 680.8,456.4 679.4,462.4M648.1,435.8 646.7,448.9 648.1,454.9 649.6,459.4 650.4,466.9 653.3,470.9M653.3,470.9 659.5,468.8 665.8,468.5 668.9,461.2 676.3,460.3 679.4,462.4M644.4,457.9 646.7,454.9M653.3,470.9 649.6,476.2 649.6,484.1 645.9,493.8 645.3,503.8 643.9,514.2 642.4,526.8 640.5,540.0 641.0,552.0 638.2,562.5 635.3,569.0 639.6,573.5 648.1,579.4M679.4,462.4 680.8,469.1 686.0,470.0 689.4,474.7 689.1,479.7 679.1,485.1 680.6,494.5 685.1,494.2 692.2,506.2M665.8,468.5 673.7,474.7 679.1,485.1M680.6,494.5 678.3,507.2M839.3,297.9 839.8,306.5 834.4,309.5 830.2,315.1 819.7,319.0 819.7,322.2 806.9,322.2M819.7,323.5 819.7,328.0 810.3,327.7 810.3,335.5 807.4,342.3 796.0,342.3M819.7,323.5 830.7,330.8 847.8,344.1 853.8,349.2 856.6,347.7 860.9,347.7 878.5,335.5M830.7,330.8 825.9,331.1 828.8,356.7 811.7,359.7 809.7,362.0M868.9,291.2 868.0,299.3 865.7,302.0 871.4,314.1 872.8,330.8 878.5,335.5M877.1,304.4 873.7,309.1 871.4,314.1M915.5,309.5 915.5,340.1 949.4,340.1M878.5,335.5 884.2,338.3 888.5,337.0 912.7,347.7 912.7,346.2 915.5,346.2 915.5,340.1M888.5,337.0 887.1,346.2 882.8,364.1M856.6,347.7 854.4,360.0 847.2,361.1M854.4,370.8 864.3,367.0 883.1,365.0M912.7,347.7 908.4,364.1 907.0,368.5 911.2,378.6M888.5,382.9 897.0,381.5 905.6,377.2 911.2,378.6M883.1,365.0 887.1,375.7 888.5,382.9 885.6,391.5M885.6,391.5 897.0,394.3 908.4,392.3 922.6,390.1M911.2,378.6 922.6,390.1M911.2,378.6 938.3,374.3 941.1,380.0 948.2,362.6 949.4,358.2 953.9,352.2M966.7,372.8 969.6,378.6 980.9,381.5 972.4,390.1 963.9,392.9M941.1,391.2 946.8,391.5 961.0,392.9 961.0,409.1M941.1,407.1 956.2,417.7M922.6,390.1 941.1,391.2M885.6,391.5 889.9,398.6 894.2,407.1 891.3,412.8 880.0,418.5M880.0,421.4 891.3,425.7 905.6,425.7 907.0,435.8 912.7,435.8M912.7,435.8 919.8,438.7 924.0,428.6 926.9,428.6M922.6,390.1 931.2,394.3 928.9,407.1 926.9,428.6M942.5,437.2 959.3,434.3M926.9,428.6 938.3,431.4 942.5,437.2 944.0,446.0 937.7,453.4M907.0,441.6 912.7,435.8M878.0,454.3 901.3,454.9 911.2,456.4M901.3,468.5 901.3,477.2 901.3,488.9 891.3,489.3M901.3,477.2 918.4,476.2 928.3,469.1 934.0,469.4M916.1,455.8 925.5,451.9 931.2,449.8M934.0,469.4 938.3,459.4 937.7,453.4 931.2,449.8M907.0,441.6 907.0,455.8 916.1,455.8M797.5,358.2 809.7,362.0M809.7,362.0 811.7,368.8 820.2,374.3 828.8,374.6 835.9,372.8 844.4,372.8 851.5,369.9 854.4,370.8M820.2,374.3 821.6,391.5M835.9,372.8 836.4,390.1M844.4,372.8 847.8,386.9M851.5,369.9 852.1,386.3M868.6,391.2 875.7,385.8 883.1,365.0M796.9,368.8 806.0,368.5 811.7,368.8M806.0,368.5 806.6,379.2M839.3,267.0 853.5,270.9M851.5,234.7 860.9,241.8 867.7,244.0 865.7,250.0 861.5,255.8 864.3,257.0 865.7,265.4M865.7,250.0 874.3,250.4 881.4,250.4 883.7,244.8 880.0,238.3 886.5,235.1 885.1,221.6M861.5,224.0 861.5,231.5 860.9,241.8M868.9,216.7 871.4,217.2M886.5,235.1 897.9,241.8 908.4,244.0M908.4,244.0 911.2,232.8 911.2,221.6 904.4,213.2M924.0,192.5 922.6,203.4 924.0,211.2 931.2,213.7M904.4,213.2 919.8,213.2 924.0,211.2M905.6,203.9 912.7,200.7 922.6,203.4M924.0,186.8 929.7,180.9 928.3,165.4 929.7,144.8 926.9,125.6M877.1,195.3 880.0,183.9 878.5,168.6 885.6,155.4 892.8,137.4 902.7,129.6 915.5,133.5 926.9,125.6M913.2,153.3 911.2,141.1 902.7,129.6M874.3,252.5 883.7,254.5 891.3,254.5 892.8,248.3 897.9,241.8M908.4,244.0 909.5,248.3 919.8,247.0 924.6,254.5 924.6,258.6 928.9,259.9M909.5,248.3 904.1,255.4 908.4,262.7 915.5,265.8 923.8,265.4M892.8,248.3 898.4,256.6 902.7,262.7 908.4,262.7M908.4,262.7 909.8,275.1 919.2,273.6M899.9,273.2 904.1,272.4 909.8,275.1M901.9,281.4 904.1,277.0 909.8,275.1M934.0,230.1 945.4,238.3 958.2,241.3 953.1,252.1M931.2,213.7 935.4,225.9 934.0,230.1M911.2,232.8 934.0,230.1M919.8,213.2 931.2,213.7M946.8,291.6 963.9,290.2 971.0,290.2 971.0,281.8M962.7,274.0 968.1,275.8 971.8,281.1M955.3,307.1 961.0,299.6 963.9,290.2M971.0,290.2 975.2,297.9 979.5,304.8 982.4,314.8M955.3,307.1 971.0,317.4 980.9,316.4M966.1,357.0 978.1,355.2 992.3,349.2 1002.3,338.0 1003.7,331.4M949.6,309.8 955.3,307.1M945.4,304.8 949.6,309.8 944.0,316.7M941.7,310.5 943.7,316.4M946.8,291.6 948.2,304.8 945.4,304.8M983.8,254.5 978.1,239.6 992.3,232.8 1002.3,236.9 1017.9,235.1 1017.9,221.1 1040.7,214.7 1053.5,221.1 1062.9,219.6 1072.0,236.0 1080.5,235.1 1091.9,243.5M1091.9,243.5 1087.6,252.5 1079.1,258.6 1072.5,260.7 1072.5,271.7 1057.7,270.5 1046.4,272.4 1039.2,276.2 1017.9,262.7 1003.7,260.7 1003.7,275.1 995.2,272.4M997.7,289.8 1006.5,287.3 1017.9,292.6 1027.9,290.2 1037.3,290.2 1047.8,290.9 1056.3,290.2M1046.4,272.4 1053.5,281.8 1056.3,290.2M1003.7,275.1 1017.9,276.2 1027.9,281.8 1037.3,290.2M1056.3,290.2 1046.4,294.4 1043.5,303.1 1042.1,309.8 1033.6,315.4 1019.3,316.4 1017.6,315.4M1017.9,292.6 1016.5,303.1 1017.6,315.4 1023.0,320.6 1019.9,330.8M1056.3,290.2 1059.2,299.6 1056.6,306.5 1056.3,312.1 1047.8,321.9 1043.5,326.1 1046.4,332.4 1039.2,334.6M1059.2,299.6 1066.3,296.2 1072.0,306.5 1074.8,314.1 1083.3,319.7 1094.7,321.9 1099.0,321.3 1106.1,321.9 1120.3,320.3M1072.0,318.7 1094.7,326.1 1095.0,321.9M1095.0,326.1 1097.6,340.1M1095.0,326.1 1106.1,330.8 1107.5,332.4 1106.9,343.2M1120.3,320.3 1113.2,333.9 1107.5,343.2M1056.3,290.2 1059.2,290.9 1072.5,271.7M1120.3,320.3 1124.6,330.8 1126.0,340.1 1133.1,341.7 1137.4,338.6 1144.5,337.0 1151.6,341.7M1133.1,341.7 1128.8,344.7 1124.6,358.2 1124.3,368.5M1128.8,344.7 1141.6,353.7 1144.5,362.6 1136.0,364.1 1137.1,370.8M1137.4,338.6 1140.2,349.2 1150.2,362.6 1148.8,371.4 1143.1,374.3M1129.4,385.8 1134.5,387.2M1091.9,243.5 1101.8,258.6 1117.5,270.5 1143.1,274.3 1163.0,268.6 1175.8,254.5 1184.3,251.6 1174.4,240.5M1091.9,243.5 1103.2,237.4 1123.2,230.5 1148.8,239.6 1174.4,240.5M1174.4,240.5 1185.7,224.4 1205.6,239.6 1228.4,246.1 1217.0,261.1 1216.2,271.3M1198.2,280.3 1208.5,274.3 1216.2,271.3M1203.1,288.4 1209.6,285.1M1156.2,398.6 1168.7,400.0 1177.2,392.3M1245.5,411.7 1245.5,430.3"/></defs><g fill="none" stroke="#d2d2d2" stroke-width="0.7"><use href="#bord" x="-1024"/><use href="#bord"/><use href="#bord" x="1024"/></g>
<g fill="#cdd3d5"><use href="#casp" x="-1024"/><use href="#casp"/><use href="#casp" x="1024"/></g>
<g font-family="Liberation Sans" text-anchor="middle"><text font-size="12" letter-spacing="2.9" fill="#96a0a4" font-style="italic" transform="rotate(-17 430.0 52.0)"><tspan x="430.0" y="56.3">Arctic Ocean</tspan></text><text font-size="12" letter-spacing="2.9" fill="#96a0a4" font-style="italic" transform="rotate(-17 1454.0 52.0)"><tspan x="1454.0" y="56.3">Arctic Ocean</tspan></text><text font-size="7" letter-spacing="0.5" fill="#96a0a4" font-style="italic" transform="rotate(-22 460.0 94.0)"><tspan x="460.0" y="96.5">Beaufort Sea</tspan></text><text font-size="7" letter-spacing="0.5" fill="#96a0a4" font-style="italic" transform="rotate(-22 1484.0 94.0)"><tspan x="1484.0" y="96.5">Beaufort Sea</tspan></text><text font-size="7" letter-spacing="0.5" fill="#96a0a4" font-style="italic"><tspan x="348.0" y="200.2">Bering</tspan><tspan x="348.0" y="207.8">Sea</tspan></text><text font-size="7" letter-spacing="0.5" fill="#96a0a4" font-style="italic"><tspan x="1372.0" y="200.2">Bering</tspan><tspan x="1372.0" y="207.8">Sea</tspan></text><text font-size="7" letter-spacing="0.5" fill="#96a0a4" font-style="italic" transform="rotate(62 652.0 89.0)"><tspan x="652.0" y="91.5">Baffin Bay</tspan></text><text font-size="7" letter-spacing="0.5" fill="#96a0a4" font-style="italic" transform="rotate(62 1676.0 89.0)"><tspan x="1676.0" y="91.5">Baffin Bay</tspan></text><text font-size="5.6" letter-spacing="-0.1" fill="#777" font-style="normal"><tspan x="726.0" y="77.0">Greenland</tspan></text><text font-size="5.6" letter-spacing="-0.1" fill="#777" font-style="normal"><tspan x="1750.0" y="77.0">Greenland</tspan></text><text font-size="6.8" letter-spacing="-0.15" fill="#6e6e6e" font-style="normal"><tspan x="544.0" y="214.4">Canada</tspan></text><text font-size="6.8" letter-spacing="-0.15" fill="#6e6e6e" font-style="normal"><tspan x="1568.0" y="214.4">Canada</tspan></text><text font-size="6.8" letter-spacing="-0.15" fill="#6e6e6e" font-style="normal"><tspan x="566.6" y="283.7">United States</tspan></text><text font-size="6.8" letter-spacing="-0.15" fill="#6e6e6e" font-style="normal"><tspan x="1590.6" y="283.7">United States</tspan></text><text font-size="6.8" letter-spacing="-0.15" fill="#6e6e6e" font-style="normal"><tspan x="553.0" y="335.4">Mexico</tspan></text><text font-size="6.8" letter-spacing="-0.15" fill="#6e6e6e" font-style="normal"><tspan x="1577.0" y="335.4">Mexico</tspan></text><text font-size="6.8" letter-spacing="-0.15" fill="#6e6e6e" font-style="normal"><tspan x="619.5" y="341.9">Cuba</tspan></text><text font-size="6.8" letter-spacing="-0.15" fill="#6e6e6e" font-style="normal"><tspan x="1643.5" y="341.9">Cuba</tspan></text><text font-size="5.6" letter-spacing="-0.1" fill="#777" font-style="normal"><tspan x="587.7" y="360.7">Guatemala</tspan></text><text font-size="5.6" letter-spacing="-0.1" fill="#777" font-style="normal"><tspan x="1611.7" y="360.7">Guatemala</tspan></text><text font-size="5.6" letter-spacing="-0.1" fill="#777" font-style="normal"><tspan x="606.0" y="376.0">Costa Rica</tspan></text><text font-size="5.6" letter-spacing="-0.1" fill="#777" font-style="normal"><tspan x="1630.0" y="376.0">Costa Rica</tspan></text><text font-size="12" letter-spacing="2.9" fill="#96a0a4" font-style="italic"><tspan x="384.4" y="283.3">North</tspan><tspan x="384.4" y="299.1">Pacific</tspan><tspan x="384.4" y="314.9">Ocean</tspan></text><text font-size="12" letter-spacing="2.9" fill="#96a0a4" font-style="italic"><tspan x="1408.4" y="283.3">North</tspan><tspan x="1408.4" y="299.1">Pacific</tspan><tspan x="1408.4" y="314.9">Ocean</tspan></text><text font-size="12" letter-spacing="2.9" fill="#96a0a4" font-style="italic"><tspan x="430.2" y="494.8">South</tspan><tspan x="430.2" y="510.6">Pacific</tspan><tspan x="430.2" y="526.4">Ocean</tspan></text><text font-size="12" letter-spacing="2.9" fill="#96a0a4" font-style="italic"><tspan x="1454.2" y="494.8">South</tspan><tspan x="1454.2" y="510.6">Pacific</tspan><tspan x="1454.2" y="526.4">Ocean</tspan></text><text font-size="12" letter-spacing="2.9" fill="#96a0a4" font-style="italic"><tspan x="740.7" y="267.1">North</tspan><tspan x="740.7" y="282.9">Atlantic</tspan><tspan x="740.7" y="298.7">Ocean</tspan></text><text font-size="12" letter-spacing="2.9" fill="#96a0a4" font-style="italic"><tspan x="1764.7" y="267.1">North</tspan><tspan x="1764.7" y="282.9">Atlantic</tspan><tspan x="1764.7" y="298.7">Ocean</tspan></text><text font-size="12" letter-spacing="2.9" fill="#96a0a4" font-style="italic"><tspan x="803.0" y="478.7">South</tspan><tspan x="803.0" y="494.5">Atlantic</tspan><tspan x="803.0" y="510.3">Ocean</tspan></text><text font-size="12" letter-spacing="2.9" fill="#96a0a4" font-style="italic"><tspan x="48.3" y="469.3">Indian</tspan><tspan x="48.3" y="485.1">Ocean</tspan></text><text font-size="12" letter-spacing="2.9" fill="#96a0a4" font-style="italic"><tspan x="1072.3" y="469.3">Indian</tspan><tspan x="1072.3" y="485.1">Ocean</tspan></text><text font-size="9" letter-spacing="0.9" fill="#96a0a4" font-style="italic"><tspan x="837.8" y="35.4">Greenland</tspan><tspan x="837.8" y="46.9">Sea</tspan></text><text font-size="9" letter-spacing="0.9" fill="#96a0a4" font-style="italic"><tspan x="-55.6" y="54.2">Barents</tspan><tspan x="-55.6" y="65.7">Sea</tspan></text><text font-size="9" letter-spacing="0.9" fill="#96a0a4" font-style="italic"><tspan x="968.4" y="54.2">Barents</tspan><tspan x="968.4" y="65.7">Sea</tspan></text><text font-size="7" letter-spacing="0.5" fill="#96a0a4" font-style="italic" transform="rotate(-65 48.9 49.6)"><tspan x="48.9" y="52.1">Kara Sea</tspan></text><text font-size="7" letter-spacing="0.5" fill="#96a0a4" font-style="italic" transform="rotate(-65 1072.9 49.6)"><tspan x="1072.9" y="52.1">Kara Sea</tspan></text><text font-size="9" letter-spacing="0.9" fill="#96a0a4" font-style="italic" transform="rotate(-45 875.5 123.7)"><tspan x="875.5" y="126.9">Norwegian Sea</tspan></text><text font-size="9" letter-spacing="0.9" fill="#96a0a4" font-style="italic" transform="rotate(28 157.8 44.6)"><tspan x="157.8" y="47.8">Laptev Sea</tspan></text><text font-size="9" letter-spacing="0.9" fill="#96a0a4" font-style="italic" transform="rotate(28 1181.8 44.6)"><tspan x="1181.8" y="47.8">Laptev Sea</tspan></text><text font-size="7" letter-spacing="0.5" fill="#96a0a4" font-style="italic"><tspan x="346.8" y="200.0">Bering</tspan><tspan x="346.8" y="207.6">Sea</tspan></text><text font-size="7" letter-spacing="0.5" fill="#96a0a4" font-style="italic"><tspan x="1370.8" y="200.0">Bering</tspan><tspan x="1370.8" y="207.6">Sea</tspan></text><text font-size="7" letter-spacing="0.5" fill="#96a0a4" font-style="italic"><tspan x="1.2" y="361.5">Arabian</tspan><tspan x="1.2" y="369.1">Sea</tspan></text><text font-size="7" letter-spacing="0.5" fill="#96a0a4" font-style="italic"><tspan x="1025.2" y="361.5">Arabian</tspan><tspan x="1025.2" y="369.1">Sea</tspan></text><text font-size="7" letter-spacing="0.5" fill="#96a0a4" font-style="italic"><tspan x="268.5" y="455.9">Coral</tspan><tspan x="268.5" y="463.5">Sea</tspan></text><text font-size="7" letter-spacing="0.5" fill="#96a0a4" font-style="italic"><tspan x="1292.5" y="455.9">Coral</tspan><tspan x="1292.5" y="463.5">Sea</tspan></text><text font-size="7" letter-spacing="0.5" fill="#96a0a4" font-style="italic"><tspan x="704.9" y="598.7">Scotia</tspan><tspan x="704.9" y="606.3">Sea</tspan></text><text font-size="7" letter-spacing="0.5" fill="#96a0a4" font-style="italic"><tspan x="1728.9" y="598.7">Scotia</tspan><tspan x="1728.9" y="606.3">Sea</tspan></text><text font-size="6.8" letter-spacing="-0.15" fill="#6e6e6e" font-style="normal"><tspan x="902.7" y="28.2">Svalbard</tspan></text><text font-size="6.8" letter-spacing="-0.15" fill="#6e6e6e" font-style="normal"><tspan x="792.3" y="160.4">Iceland</tspan></text><text font-size="6.8" letter-spacing="-0.15" fill="#6e6e6e" font-style="normal"><tspan x="895.0" y="160.6">Sweden</tspan></text><text font-size="6.8" letter-spacing="-0.15" fill="#6e6e6e" font-style="normal"><tspan x="920.0" y="174.9">Finland</tspan></text><text font-size="6.8" letter-spacing="-0.15" fill="#6e6e6e" font-style="normal"><tspan x="870.0" y="184.4">Norway</tspan></text><text font-size="5.6" letter-spacing="-0.1" fill="#777" font-style="normal"><tspan x="918.6" y="198.0">Estonia</tspan></text><text font-size="6.8" letter-spacing="-0.15" fill="#6e6e6e" font-style="normal"><tspan x="873.5" y="213.2">Denmark</tspan></text><text font-size="5.6" letter-spacing="-0.1" fill="#777" font-style="normal"><tspan x="913.0" y="215.5">Lithuania</tspan></text><text font-size="6.8" letter-spacing="-0.15" fill="#6e6e6e" font-style="normal"><tspan x="838.0" y="218.4">United</tspan><tspan x="838.0" y="225.0">Kingdom</tspan></text><text font-size="6.8" letter-spacing="-0.15" fill="#6e6e6e" font-style="normal"><tspan x="873.5" y="236.4">Germany</tspan></text><text font-size="6.8" letter-spacing="-0.15" fill="#6e6e6e" font-style="normal"><tspan x="934.5" y="244.4">Ukraine</tspan></text><text font-size="6.8" letter-spacing="-0.15" fill="#6e6e6e" font-style="normal"><tspan x="852.0" y="250.8">France</tspan></text><text font-size="5.6" letter-spacing="-0.1" fill="#777" font-style="normal"><tspan x="886.0" y="251.6">Austria</tspan></text><text font-size="6.8" letter-spacing="-0.15" fill="#6e6e6e" font-style="normal"><tspan x="916.0" y="258.9">Romania</tspan></text><text font-size="6.8" letter-spacing="-0.15" fill="#6e6e6e" font-style="normal"><tspan x="12.5" y="249.3">Kazakhstan</tspan></text><text font-size="6.8" letter-spacing="-0.15" fill="#6e6e6e" font-style="normal"><tspan x="1036.5" y="249.3">Kazakhstan</tspan></text><text font-size="6.8" letter-spacing="-0.15" fill="#6e6e6e" font-style="normal"><tspan x="96.3" y="179.6">Russia</tspan></text><text font-size="6.8" letter-spacing="-0.15" fill="#6e6e6e" font-style="normal"><tspan x="1120.3" y="179.6">Russia</tspan></text><text font-size="6.8" letter-spacing="-0.15" fill="#6e6e6e" font-style="normal"><tspan x="833.5" y="277.1">Spain</tspan></text><text font-size="6.8" letter-spacing="-0.15" fill="#6e6e6e" font-style="normal"><tspan x="881.0" y="272.7">Italy</tspan></text><text font-size="6.8" letter-spacing="-0.15" fill="#6e6e6e" font-style="normal"><tspan x="917.0" y="272.0">Bulgaria</tspan></text><text font-size="6.8" letter-spacing="-0.15" fill="#6e6e6e" font-style="normal"><tspan x="-55.0" y="274.0">Georgia</tspan></text><text font-size="6.8" letter-spacing="-0.15" fill="#6e6e6e" font-style="normal"><tspan x="969.0" y="274.0">Georgia</tspan></text><text font-size="6.8" letter-spacing="-0.15" fill="#6e6e6e" font-style="normal"><tspan x="-79.0" y="285.4">Turkey</tspan></text><text font-size="6.8" letter-spacing="-0.15" fill="#6e6e6e" font-style="normal"><tspan x="945.0" y="285.4">Turkey</tspan></text><text font-size="6.8" letter-spacing="-0.15" fill="#6e6e6e" font-style="normal"><tspan x="913.0" y="287.1">Greece</tspan></text><text font-size="6.8" letter-spacing="-0.15" fill="#6e6e6e" font-style="normal"><tspan x="-10.0" y="284.9">Turkmenistan</tspan></text><text font-size="6.8" letter-spacing="-0.15" fill="#6e6e6e" font-style="normal"><tspan x="1014.0" y="284.9">Turkmenistan</tspan></text><text font-size="6.8" letter-spacing="-0.15" fill="#6e6e6e" font-style="normal"><tspan x="33.7" y="276.1">Kyrgyzstan</tspan></text><text font-size="6.8" letter-spacing="-0.15" fill="#6e6e6e" font-style="normal"><tspan x="1057.7" y="276.1">Kyrgyzstan</tspan></text><text font-size="6.8" letter-spacing="-0.15" fill="#6e6e6e" font-style="normal"><tspan x="110.8" y="297.5">China</tspan></text><text font-size="6.8" letter-spacing="-0.15" fill="#6e6e6e" font-style="normal"><tspan x="1134.8" y="297.5">China</tspan></text><text font-size="6.8" letter-spacing="-0.15" fill="#6e6e6e" font-style="normal"><tspan x="872.8" y="302.4">Tunisia</tspan></text><text font-size="6.8" letter-spacing="-0.15" fill="#6e6e6e" font-style="normal"><tspan x="828.5" y="308.4">Morocco</tspan></text><text font-size="6.8" letter-spacing="-0.15" fill="#6e6e6e" font-style="normal"><tspan x="-69.1" y="299.1">Syria</tspan></text><text font-size="6.8" letter-spacing="-0.15" fill="#6e6e6e" font-style="normal"><tspan x="954.9" y="299.1">Syria</tspan></text><text font-size="6.8" letter-spacing="-0.15" fill="#6e6e6e" font-style="normal"><tspan x="-24.5" y="308.2">Iran</tspan></text><text font-size="6.8" letter-spacing="-0.15" fill="#6e6e6e" font-style="normal"><tspan x="999.5" y="308.2">Iran</tspan></text><text font-size="6.8" letter-spacing="-0.15" fill="#6e6e6e" font-style="normal"><tspan x="8.9" y="303.4">Afghanistan</tspan></text><text font-size="6.8" letter-spacing="-0.15" fill="#6e6e6e" font-style="normal"><tspan x="1032.9" y="303.4">Afghanistan</tspan></text><text font-size="6.8" letter-spacing="-0.15" fill="#6e6e6e" font-style="normal"><tspan x="852.8" y="322.2">Algeria</tspan></text><text font-size="6.8" letter-spacing="-0.15" fill="#6e6e6e" font-style="normal"><tspan x="896.7" y="326.0">Libya</tspan></text><text font-size="6.8" letter-spacing="-0.15" fill="#6e6e6e" font-style="normal"><tspan x="930.5" y="327.8">Egypt</tspan></text><text font-size="5.6" letter-spacing="-0.1" fill="#777" font-style="normal"><tspan x="-44.0" y="318.5">Kuwait</tspan></text><text font-size="5.6" letter-spacing="-0.1" fill="#777" font-style="normal"><tspan x="980.0" y="318.5">Kuwait</tspan></text><text font-size="6.8" letter-spacing="-0.15" fill="#6e6e6e" font-style="normal"><tspan x="13.3" y="322.3">Pakistan</tspan></text><text font-size="6.8" letter-spacing="-0.15" fill="#6e6e6e" font-style="normal"><tspan x="1037.3" y="322.3">Pakistan</tspan></text><text font-size="6.8" letter-spacing="-0.15" fill="#6e6e6e" font-style="normal"><tspan x="59.4" y="322.3">Nepal</tspan></text><text font-size="6.8" letter-spacing="-0.15" fill="#6e6e6e" font-style="normal"><tspan x="1083.4" y="322.3">Nepal</tspan></text><text font-size="6.8" letter-spacing="-0.15" fill="#6e6e6e" font-style="normal"><tspan x="114.4" y="254.5">Mongolia</tspan></text><text font-size="6.8" letter-spacing="-0.15" fill="#6e6e6e" font-style="normal"><tspan x="1138.4" y="254.5">Mongolia</tspan></text><text font-size="5.6" letter-spacing="-0.1" fill="#777" font-style="normal"><tspan x="182.5" y="280.4">North Korea</tspan></text><text font-size="5.6" letter-spacing="-0.1" fill="#777" font-style="normal"><tspan x="1206.5" y="280.4">North Korea</tspan></text><text font-size="5.6" letter-spacing="-0.1" fill="#777" font-style="normal"><tspan x="185.6" y="294.0">South Korea</tspan></text><text font-size="5.6" letter-spacing="-0.1" fill="#777" font-style="normal"><tspan x="1209.6" y="294.0">South Korea</tspan></text><text font-size="6.8" letter-spacing="-0.15" fill="#6e6e6e" font-style="normal"><tspan x="215.4" y="294.4">Japan</tspan></text><text font-size="6.8" letter-spacing="-0.15" fill="#6e6e6e" font-style="normal"><tspan x="1239.4" y="294.4">Japan</tspan></text><text font-size="6.8" letter-spacing="-0.15" fill="#6e6e6e" font-style="normal"><tspan x="77.3" y="334.2">Bangladesh</tspan></text><text font-size="6.8" letter-spacing="-0.15" fill="#6e6e6e" font-style="normal"><tspan x="1101.3" y="334.2">Bangladesh</tspan></text><text font-size="5.6" letter-spacing="-0.1" fill="#777" font-style="normal"><tspan x="164.7" y="335.9">Taiwan</tspan></text><text font-size="5.6" letter-spacing="-0.1" fill="#777" font-style="normal"><tspan x="1188.7" y="335.9">Taiwan</tspan></text><text font-size="6.8" letter-spacing="-0.15" fill="#6e6e6e" font-style="normal"><tspan x="44.1" y="341.1">India</tspan></text><text font-size="6.8" letter-spacing="-0.15" fill="#6e6e6e" font-style="normal"><tspan x="1068.1" y="341.1">India</tspan></text><text font-size="6.8" letter-spacing="-0.15" fill="#6e6e6e" font-style="normal"><tspan x="-16.7" y="343.6">Oman</tspan></text><text font-size="6.8" letter-spacing="-0.15" fill="#6e6e6e" font-style="normal"><tspan x="1007.3" y="343.6">Oman</tspan></text><text font-size="6.8" letter-spacing="-0.15" fill="#6e6e6e" font-style="normal"><tspan x="112.9" y="348.3">Laos</tspan></text><text font-size="6.8" letter-spacing="-0.15" fill="#6e6e6e" font-style="normal"><tspan x="1136.9" y="348.3">Laos</tspan></text><text font-size="6.8" letter-spacing="-0.15" fill="#6e6e6e" font-style="normal"><tspan x="129.0" y="364.6">Vietnam</tspan></text><text font-size="6.8" letter-spacing="-0.15" fill="#6e6e6e" font-style="normal"><tspan x="1153.0" y="364.6">Vietnam</tspan></text><text font-size="6.8" letter-spacing="-0.15" fill="#6e6e6e" font-style="normal"><tspan x="170.3" y="372.4">Philippines</tspan></text><text font-size="6.8" letter-spacing="-0.15" fill="#6e6e6e" font-style="normal"><tspan x="1194.3" y="372.4">Philippines</tspan></text><text font-size="6.8" letter-spacing="-0.15" fill="#6e6e6e" font-style="normal"><tspan x="50.4" y="384.1">Sri Lanka</tspan></text><text font-size="6.8" letter-spacing="-0.15" fill="#6e6e6e" font-style="normal"><tspan x="1074.4" y="384.1">Sri Lanka</tspan></text><text font-size="6.8" letter-spacing="-0.15" fill="#6e6e6e" font-style="normal"><tspan x="111.8" y="393.3">Malaysia</tspan></text><text font-size="6.8" letter-spacing="-0.15" fill="#6e6e6e" font-style="normal"><tspan x="1135.8" y="393.3">Malaysia</tspan></text><text font-size="5.6" letter-spacing="-0.1" fill="#777" font-style="normal"><tspan x="146.9" y="392.9">Brunei</tspan></text><text font-size="5.6" letter-spacing="-0.1" fill="#777" font-style="normal"><tspan x="1170.9" y="392.9">Brunei</tspan></text><text font-size="5.6" letter-spacing="-0.1" fill="#777" font-style="normal"><tspan x="29.5" y="396.3">Maldives</tspan></text><text font-size="5.6" letter-spacing="-0.1" fill="#777" font-style="normal"><tspan x="1053.5" y="396.3">Maldives</tspan></text><text font-size="6.8" letter-spacing="-0.15" fill="#6e6e6e" font-style="normal"><tspan x="154.8" y="412.4">Indonesia</tspan></text><text font-size="6.8" letter-spacing="-0.15" fill="#6e6e6e" font-style="normal"><tspan x="1178.8" y="412.4">Indonesia</tspan></text><text font-size="6.8" letter-spacing="-0.15" fill="#6e6e6e" font-style="normal"><tspan x="234.3" y="420.8">Papua New</tspan><tspan x="234.3" y="427.4">Guinea</tspan></text><text font-size="6.8" letter-spacing="-0.15" fill="#6e6e6e" font-style="normal"><tspan x="1258.3" y="420.8">Papua New</tspan><tspan x="1258.3" y="427.4">Guinea</tspan></text><text font-size="5.6" letter-spacing="-0.1" fill="#777" font-style="normal"><tspan x="-14.6" y="464.8">Mauritius</tspan></text><text font-size="5.6" letter-spacing="-0.1" fill="#777" font-style="normal"><tspan x="1009.4" y="464.8">Mauritius</tspan></text><text font-size="6.8" letter-spacing="-0.15" fill="#6e6e6e" font-style="normal"><tspan x="203.5" y="482.0">Australia</tspan></text><text font-size="6.8" letter-spacing="-0.15" fill="#6e6e6e" font-style="normal"><tspan x="1227.5" y="482.0">Australia</tspan></text><text font-size="5.6" letter-spacing="-0.1" fill="#777" font-style="normal"><tspan x="309.2" y="536.8">New Zealand</tspan></text><text font-size="5.6" letter-spacing="-0.1" fill="#777" font-style="normal"><tspan x="1333.2" y="536.8">New Zealand</tspan></text><text font-size="6.8" letter-spacing="-0.15" fill="#6e6e6e" font-style="normal"><tspan x="637.0" y="397.0">Colombia</tspan></text><text font-size="6.8" letter-spacing="-0.15" fill="#6e6e6e" font-style="normal"><tspan x="1661.0" y="397.0">Colombia</tspan></text><text font-size="5.6" letter-spacing="-0.1" fill="#777" font-style="normal"><tspan x="677.4" y="389.7">Guyana</tspan></text><text font-size="5.6" letter-spacing="-0.1" fill="#777" font-style="normal"><tspan x="1701.4" y="389.7">Guyana</tspan></text><text font-size="6.8" letter-spacing="-0.15" fill="#6e6e6e" font-style="normal"><tspan x="621.5" y="409.4">Ecuador</tspan></text><text font-size="6.8" letter-spacing="-0.15" fill="#6e6e6e" font-style="normal"><tspan x="1645.5" y="409.4">Ecuador</tspan></text><text font-size="6.8" letter-spacing="-0.15" fill="#6e6e6e" font-style="normal"><tspan x="631.0" y="435.0">Peru</tspan></text><text font-size="6.8" letter-spacing="-0.15" fill="#6e6e6e" font-style="normal"><tspan x="1655.0" y="435.0">Peru</tspan></text><text font-size="6.8" letter-spacing="-0.15" fill="#6e6e6e" font-style="normal"><tspan x="698.5" y="433.2">Brazil</tspan></text><text font-size="6.8" letter-spacing="-0.15" fill="#6e6e6e" font-style="normal"><tspan x="1722.5" y="433.2">Brazil</tspan></text><text font-size="6.8" letter-spacing="-0.15" fill="#6e6e6e" font-style="normal"><tspan x="662.6" y="454.7">Bolivia</tspan></text><text font-size="6.8" letter-spacing="-0.15" fill="#6e6e6e" font-style="normal"><tspan x="1686.6" y="454.7">Bolivia</tspan></text><text font-size="6.8" letter-spacing="-0.15" fill="#6e6e6e" font-style="normal"><tspan x="679.0" y="474.2">Paraguay</tspan></text><text font-size="6.8" letter-spacing="-0.15" fill="#6e6e6e" font-style="normal"><tspan x="1703.0" y="474.2">Paraguay</tspan></text><text font-size="6.8" letter-spacing="-0.15" fill="#6e6e6e" font-style="normal"><tspan x="646.7" y="485.0">Chile</tspan></text><text font-size="6.8" letter-spacing="-0.15" fill="#6e6e6e" font-style="normal"><tspan x="1670.7" y="485.0">Chile</tspan></text><text font-size="6.8" letter-spacing="-0.15" fill="#6e6e6e" font-style="normal"><tspan x="685.6" y="504.7">Uruguay</tspan></text><text font-size="6.8" letter-spacing="-0.15" fill="#6e6e6e" font-style="normal"><tspan x="1709.6" y="504.7">Uruguay</tspan></text><text font-size="6.8" letter-spacing="-0.15" fill="#6e6e6e" font-style="normal"><tspan x="663.0" y="517.0">Argentina</tspan></text><text font-size="6.8" letter-spacing="-0.15" fill="#6e6e6e" font-style="normal"><tspan x="1687.0" y="517.0">Argentina</tspan></text><text font-size="5.6" letter-spacing="-0.1" fill="#777" font-style="normal"><tspan x="675.9" y="573.0">Falkland</tspan><tspan x="675.9" y="578.6">Islands (Islas</tspan><tspan x="675.9" y="584.2">Malvinas)</tspan></text><text font-size="5.6" letter-spacing="-0.1" fill="#777" font-style="normal"><tspan x="1699.9" y="573.0">Falkland</tspan><tspan x="1699.9" y="578.6">Islands (Islas</tspan><tspan x="1699.9" y="584.2">Malvinas)</tspan></text><text font-size="5.6" letter-spacing="-0.1" fill="#777" font-style="normal"><tspan x="806.0" y="330.7">Western</tspan><tspan x="806.0" y="336.3">Sahara</tspan></text><text font-size="6.8" letter-spacing="-0.15" fill="#6e6e6e" font-style="normal"><tspan x="-51.2" y="337.0">Saudi Arabia</tspan></text><text font-size="6.8" letter-spacing="-0.15" fill="#6e6e6e" font-style="normal"><tspan x="972.8" y="337.0">Saudi Arabia</tspan></text><text font-size="6.8" letter-spacing="-0.15" fill="#6e6e6e" font-style="normal"><tspan x="815.0" y="348.4">Mauritania</tspan></text><text font-size="6.8" letter-spacing="-0.15" fill="#6e6e6e" font-style="normal"><tspan x="841.5" y="355.4">Mali</tspan></text><text font-size="6.8" letter-spacing="-0.15" fill="#6e6e6e" font-style="normal"><tspan x="872.0" y="355.4">Niger</tspan></text><text font-size="6.8" letter-spacing="-0.15" fill="#6e6e6e" font-style="normal"><tspan x="-43.5" y="359.9">Yemen</tspan></text><text font-size="6.8" letter-spacing="-0.15" fill="#6e6e6e" font-style="normal"><tspan x="980.5" y="359.9">Yemen</tspan></text><text font-size="5.6" letter-spacing="-0.1" fill="#777" font-style="normal"><tspan x="-69.1" y="360.2">Eritrea</tspan></text><text font-size="5.6" letter-spacing="-0.1" fill="#777" font-style="normal"><tspan x="954.9" y="360.2">Eritrea</tspan></text><text font-size="6.8" letter-spacing="-0.15" fill="#6e6e6e" font-style="normal"><tspan x="898.5" y="361.4">Chad</tspan></text><text font-size="6.8" letter-spacing="-0.15" fill="#6e6e6e" font-style="normal"><tspan x="803.0" y="362.2">Senegal</tspan></text><text font-size="6.8" letter-spacing="-0.15" fill="#6e6e6e" font-style="normal"><tspan x="931.0" y="365.8">Sudan</tspan></text><text font-size="5.6" letter-spacing="-0.1" fill="#777" font-style="normal"><tspan x="841.3" y="370.5">Burkina Faso</tspan></text><text font-size="6.8" letter-spacing="-0.15" fill="#6e6e6e" font-style="normal"><tspan x="-66.0" y="381.1">Ethiopia</tspan></text><text font-size="6.8" letter-spacing="-0.15" fill="#6e6e6e" font-style="normal"><tspan x="958.0" y="381.1">Ethiopia</tspan></text><text font-size="5.6" letter-spacing="-0.1" fill="#777" font-style="normal"><tspan x="903.6" y="383.8">Central African</tspan><tspan x="903.6" y="389.4">Republic</tspan></text><text font-size="5.6" letter-spacing="-0.1" fill="#777" font-style="normal"><tspan x="842.0" y="385.9">Ghana</tspan></text><text font-size="6.8" letter-spacing="-0.15" fill="#6e6e6e" font-style="normal"><tspan x="-71.0" y="404.2">Kenya</tspan></text><text font-size="6.8" letter-spacing="-0.15" fill="#6e6e6e" font-style="normal"><tspan x="953.0" y="404.2">Kenya</tspan></text><text font-size="5.6" letter-spacing="-0.1" fill="#777" font-style="normal"><tspan x="890.8" y="403.8">Republic of</tspan><tspan x="890.8" y="409.4">the Congo</tspan></text><text font-size="6.8" letter-spacing="-0.15" fill="#6e6e6e" font-style="normal"><tspan x="-79.4" y="424.0">Tanzania</tspan></text><text font-size="6.8" letter-spacing="-0.15" fill="#6e6e6e" font-style="normal"><tspan x="944.6" y="424.0">Tanzania</tspan></text><text font-size="6.8" letter-spacing="-0.15" fill="#6e6e6e" font-style="normal"><tspan x="896.4" y="440.6">Angola</tspan></text><text font-size="5.6" letter-spacing="-0.1" fill="#777" font-style="normal"><tspan x="941.3" y="443.8">Malawi</tspan></text><text font-size="6.8" letter-spacing="-0.15" fill="#6e6e6e" font-style="normal"><tspan x="930.5" y="461.4">Zimbabwe</tspan></text><text font-size="6.8" letter-spacing="-0.15" fill="#6e6e6e" font-style="normal"><tspan x="894.6" y="467.4">Namibia</tspan></text><text font-size="6.8" letter-spacing="-0.15" fill="#6e6e6e" font-style="normal"><tspan x="913.3" y="490.1">South Africa</tspan></text></g>
<path d="M494.5,244.0 573.8,244.0 573.8,242.2 574.7,245.3 579.9,245.7 586.1,247.4 589.8,248.3 594.1,247.4 603.2,252.9 604.6,254.5 606.9,256.6 609.7,259.4 610.0,268.6 608.0,271.3 609.7,273.6 614.0,271.7 619.7,269.0 619.1,266.6 626.8,266.2 627.7,263.9 631.1,261.1 641.0,260.7 643.0,259.0 645.3,253.7 647.6,250.6 650.4,251.0 651.5,252.1 651.5,257.8 653.8,261.5 648.7,263.5 644.7,265.8 643.3,269.7 642.4,271.3 645.3,272.2 645.3,273.6 643.6,274.3 641.0,274.7 637.0,275.5 633.9,277.7 633.9,280.7 631.4,284.0 630.8,286.2 629.1,289.1 628.2,290.9 629.6,295.8 629.4,297.2 626.8,299.3 622.8,301.7 619.1,304.1 617.1,305.4 614.0,308.5 612.9,313.5 615.1,320.0 616.8,325.1 616.6,328.3 615.4,330.2 613.7,330.5 611.7,327.4 609.2,322.6 609.2,318.4 606.6,315.1 604.6,314.8 601.8,315.8 598.4,313.5 594.1,312.8 590.1,314.1 590.4,317.1 590.7,318.0 587.0,317.7 582.7,316.1 577.0,315.8 574.2,317.4 569.9,320.3 567.6,323.2 567.9,328.0 561.4,322.9 559.1,320.3 556.0,315.4 552.3,315.8 550.6,318.0 547.2,316.1 541.5,308.8 536.6,308.8 536.6,310.5 528.4,310.5 517.9,306.5 511.3,306.5 511.0,305.8 508.5,302.0 505.9,301.0 501.4,299.3 497.7,292.3 496.0,288.7 494.5,286.2 492.3,280.7 490.6,278.1 491.1,272.4 490.3,268.6 491.7,260.7 491.7,255.4 491.1,250.4 489.7,246.6 494.5,247.4ZM443.3,124.4 443.3,188.0 448.7,187.7 453.3,194.7 459.0,190.8 465.0,198.6 469.5,208.1 474.6,211.2 472.9,217.7 473.2,218.7 471.8,213.7 467.5,208.6 463.2,200.7 459.0,199.1 455.3,199.6 453.0,196.9 447.6,191.9 441.9,190.2 436.2,189.7 430.5,187.4 426.8,185.1 422.0,189.7 417.7,192.5 412.6,194.2 416.3,183.9 410.6,186.8 407.8,193.1 405.8,199.1 400.7,204.4 395.5,208.1 390.7,212.2 385.0,214.7 380.8,217.2 375.6,218.7 380.8,214.2 386.4,210.1 392.7,205.0 395.5,198.0 392.1,196.4 384.2,197.5 382.7,190.8 377.9,188.5 374.2,185.6 373.4,180.3 375.1,174.9 375.6,170.5 385.0,168.6 387.0,162.1 382.2,162.1 375.1,162.1 370.8,160.8 369.4,156.8 366.2,154.7 371.4,150.5 377.9,148.4 382.7,151.2 384.7,145.5 378.8,141.9 370.5,135.1 371.7,130.4 380.8,123.9 389.3,116.4 398.4,109.9 410.6,114.7 417.7,117.7 429.1,119.8 436.2,120.6ZM404.9,204.4 411.5,202.9 409.2,198.6 404.6,200.7Z" fill="#feb24c" fill-opacity="0.72" stroke="#222" stroke-width="0.9" stroke-linejoin="round"/>
<path d="M1249.7,434.9 1252.6,440.1 1253.4,445.4 1257.7,447.5 1258.3,452.8 1260.5,458.8 1267.7,463.3 1269.6,469.7 1273.3,470.3 1275.3,476.2 1279.9,479.4 1281.3,488.9 1279.6,497.1 1278.2,502.1 1274.8,506.6 1271.6,513.5 1271.1,519.5 1265.4,520.6 1260.5,525.3 1256.3,522.4 1252.6,524.2 1245.5,521.3 1241.8,517.7 1241.2,513.1 1237.2,512.8 1238.4,510.0 1236.4,503.8 1235.5,510.3 1231.2,510.7 1230.1,510.0 1229.0,505.5 1225.6,502.1 1219.9,500.5 1211.3,499.5 1202.8,501.5 1197.1,503.8 1195.7,506.9 1188.6,506.6 1184.3,507.9 1180.0,510.7 1175.8,510.7 1171.5,508.3 1173.2,504.9 1173.5,499.8 1171.5,493.8 1170.4,488.9 1167.2,482.5 1167.0,476.2 1167.8,470.0 1170.1,467.9 1176.3,464.2 1182.3,463.3 1188.6,460.9 1192.0,456.4 1195.7,453.4 1197.1,451.3 1201.4,446.0 1205.6,443.9 1209.1,447.5 1212.8,447.2 1214.2,443.1 1215.9,440.1 1219.9,437.2 1224.1,438.4 1228.4,439.3 1232.7,438.7 1233.5,441.6 1230.7,446.0 1235.5,450.4 1240.3,454.3 1244.9,454.9 1247.2,448.9 1247.2,441.6 1248.3,435.8ZM1255.7,531.2 1261.1,532.8 1266.2,532.0 1266.2,536.9 1264.0,540.8 1262.0,542.4 1258.3,538.1 1256.0,534.3Z" fill="#fed976" fill-opacity="0.72" stroke="#222" stroke-width="0.9" stroke-linejoin="round"/>
<g fill="#222"><circle cx="402.1" cy="347.4" r="1.6"/><circle cx="399.5" cy="343.8" r="0.9"/><circle cx="397.8" cy="342.6" r="0.9"/><circle cx="395.0" cy="342.0" r="0.9"/><circle cx="390.7" cy="340.1" r="0.9"/><circle cx="388.7" cy="340.4" r="0.9"/><circle cx="383.9" cy="337.0" r="0.9"/><circle cx="375.9" cy="335.2" r="0.9"/><circle cx="371.4" cy="334.6" r="0.9"/><circle cx="366.5" cy="330.8" r="0.9"/><circle cx="356.0" cy="328.3" r="0.9"/><circle cx="349.8" cy="327.7" r="0.9"/><circle cx="344.1" cy="321.9" r="0.9"/><circle cx="337.2" cy="320.0" r="0.9"/></g>
<path d="M375.6,219.1 370.8,222.1 363.7,225.9 355.2,228.7 343.8,231.5 334.7,232.8M1335.1,226.3 1339.3,229.2 1347.9,231.0 1355.5,233.3" fill="none" stroke="#333" stroke-width="1.5" stroke-dasharray="2.5 2"/>
<!--LABELS-->
</svg>
<div class="a" style="left:10px;top:10px;width:34px;height:64px;border:2px solid rgba(0,0,0,0.2);border-radius:4px;background:#fff;background-clip:padding-box;overflow:hidden">
<div class="a" style="left:0px;top:29.5px;width:30px;height:1px;background:#ccc"></div>
<div class="a" style="left:0px;top:30.5px;width:30px;height:30px;background:#f4f4f4"></div>
<div class="a" style="left:8.6px;top:13.8px;width:12.2px;height:2.4px;background:#000"></div>
<div class="a" style="left:13.5px;top:9px;width:2.4px;height:12.2px;background:#000"></div>
<div class="a" style="left:9.2px;top:44.5px;width:12.5px;height:2.2px;background:#bbb"></div>
</div>
<div class="a" style="left:1508px;top:10px;width:200px;height:220px;border-radius:5px;background:#fff;box-shadow:0 0 15px rgba(0,0,0,0.2);overflow:hidden">
<div class="a" style="left:0px;top:34px;width:200px;height:69.5px;background:#00325f"></div>
<div class="a" style="left:0px;top:107px;width:200px;height:65.5px;background:#00325f"></div>
<div class="a" style="left:0px;top:175.5px;width:200px;height:44.5px;background:#00325f"></div>
<div class="t " style="left:5px;top:7.57px;font-size:20px;color:#0d2b4e;letter-spacing:-0.1px">Connections</div>
<div class="t b" style="left:5px;top:42.46px;font-size:16px;color:#fff;letter-spacing:0.5px">World</div>
<div class="t " style="left:5px;top:61.76px;font-size:16px;color:#fff;letter-spacing:0.45px">Count: 247</div>
<div class="t b" style="left:5px;top:81.46px;font-size:16px;color:#e53843;letter-spacing:1.5px;-webkit-text-stroke:0.3px #e53843">Risks Killed: 9</div>
<div class="t b" style="left:5px;top:110.46px;font-size:16px;color:#fff;letter-spacing:0.5px">Local</div>
<div class="t " style="left:5px;top:129.76px;font-size:16px;color:#fff;letter-spacing:0.45px">Count: 0</div>
<div class="t b" style="left:5px;top:149.46px;font-size:16px;color:#e53843;letter-spacing:1.5px;-webkit-text-stroke:0.3px #e53843">Risks Killed: 0</div>
<div class="t " style="left:5px;top:178.26px;font-size:16px;color:#fff;letter-spacing:0.48px">Hover Country For Count</div>
<div class="t " style="left:5px;top:197.46px;font-size:16px;color:#fff;letter-spacing:0.48px">Click Country For Details</div>
</div>
<div class="a" style="left:10px;top:487px;width:169px;height:150px;border-radius:5px;background:rgba(255,255,255,0.8);box-shadow:0 0 15px rgba(0,0,0,0.2)">
<div class="t " style="left:8px;top:6.53px;font-size:16.5px;color:#555">Unique Connections</div>
<div class="a" style="left:8px;top:24.5px;width:18px;height:20px;background:#ffffb2"></div>
<div class="t " style="left:27px;top:28.42px;font-size:12.5px;color:#333">1&ndash;10</div>
<div class="a" style="left:8px;top:44.5px;width:18px;height:20px;background:#fed976"></div>
<div class="t " style="left:27px;top:48.42px;font-size:12.5px;color:#333">10&ndash;100</div>
<div class="a" style="left:8px;top:64.5px;width:18px;height:20px;background:#feb24c"></div>
<div class="t " style="left:27px;top:68.42px;font-size:12.5px;color:#333">100&ndash;1000</div>
<div class="a" style="left:8px;top:84.5px;width:18px;height:20px;background:#fd8d3c"></div>
<div class="t " style="left:27px;top:88.42px;font-size:12.5px;color:#333">1000&ndash;10000</div>
<div class="a" style="left:8px;top:104.5px;width:18px;height:20px;background:#f03b20"></div>
<div class="t " style="left:27px;top:108.42px;font-size:12.5px;color:#333">10000&ndash;100000</div>
<div class="a" style="left:8px;top:124.5px;width:18px;height:20px;background:#bd0026"></div>
<div class="t " style="left:27px;top:128.42px;font-size:12.5px;color:#333">100000+</div>
</div>
<div class="a" style="left:1558px;top:603px;width:150px;height:50px;border-radius:5px;background:rgba(255,255,255,0.8);box-shadow:0 0 15px rgba(0,0,0,0.2)">
<div class="t " style="left:8px;top:8.26px;font-size:16px;color:#333">Status:&thinsp;All</div>
<div class="t " style="left:8px;top:27.26px;font-size:16px;color:#333">Client:&nbsp; All</div>
</div>
<div class="a" style="left:0;top:646.5px;width:408px;height:16px;background:rgba(255,255,255,0.7)"></div>
<div class="t" style="left:5px;top:648.64px;font-size:12px;transform:scaleX(0.9);transform-origin:0 0;color:#333"><span style="color:#0078a8">Leaflet</span> | Map data &copy; <span style="color:#0078a8">OpenStreetMap</span> contributors, <span style="color:#0078a8">CC-BY-SA</span>, Imagery &copy; <span style="color:#0078a8">Mapbox</span></div>
</div>
<div class="a" style="left:0px;top:813px;width:1718px;height:41px;background:#00325f"></div>
<div class="a" style="left:0px;top:813px;width:1718px;height:1px;background:#1565a0"></div>
<div class="a" style="left:16px;top:822px;width:250px;height:24px;background:#fff;border-radius:4px"></div>
<svg class="a" style="left:22px;top:827px;" width="13" height="14" viewBox="0 0 13 14"><circle cx="5.2" cy="5.2" r="4.2" fill="none" stroke="#777" stroke-width="1.8"/><path d="M8.3,8.3 L12.3,12.5" stroke="#777" stroke-width="2"/></svg>
<div class="t " style="left:42.0px;top:828.77px;font-size:11.5px;transform:scaleX(0.83);transform-origin:0 0;color:#555">Search Table</div>
<svg class="a" style="left:246px;top:826px;" width="17" height="17" viewBox="0 0 17 17"><circle cx="8.5" cy="8.5" r="8.3" fill="#00325f"/><path d="M5.5,5.5 L11.5,11.5 M11.5,5.5 L5.5,11.5" stroke="#fff" stroke-width="2.3"/></svg>
<svg class="a" style="left:278px;top:828px;" width="13" height="13" viewBox="0 0 13 13"><path d="M0,0 H13 L8,6 V13 L5,11 V6Z" fill="#fff"/></svg>
<div class="t b" style="left:293.0px;top:827.50px;font-size:13px;transform:scaleX(0.86);transform-origin:0 0;color:#fff">Filter</div>
<svg class="a" style="left:323px;top:831px;" width="8" height="5" viewBox="0 0 8 5"><path d="M0,0 H8 L4,4.5Z" fill="#fff"/></svg>
<svg class="a" style="left:353px;top:827px;" width="16" height="14" viewBox="0 0 16 14"><circle cx="8" cy="4" r="3.3" fill="none" stroke="#fff" stroke-width="2"/><circle cx="4" cy="10" r="3.3" fill="none" stroke="#fff" stroke-width="2"/><circle cx="12" cy="10" r="3.3" fill="none" stroke="#fff" stroke-width="2"/></svg>
<div class="t b" style="left:370.0px;top:827.50px;font-size:13px;transform:scaleX(0.86);transform-origin:0 0;color:#fff">Group</div>
<svg class="a" style="left:404px;top:831px;" width="8" height="5" viewBox="0 0 8 5"><path d="M0,0 H8 L4,4.5Z" fill="#fff"/></svg>
<svg class="a" style="left:436px;top:827px;" width="13" height="14" viewBox="0 0 13 14"><path d="M10.5,4 A5.3,5.3 0 1 0 11.5,9" stroke="#fff" stroke-width="2.2" fill="none"/><path d="M12.8,0.5 V6 H7.3Z" fill="#fff"/></svg>
<div class="t b" style="left:451.5px;top:827.50px;font-size:13px;transform:scaleX(0.86);transform-origin:0 0;color:#fff">Reset Order</div>
<svg class="a" style="left:538px;top:827px;" width="12" height="13" viewBox="0 0 12 13"><path d="M6,13 V2 M1,6.5 L6,1.5 L11,6.5" stroke="#fff" stroke-width="2.2" fill="none"/></svg>
<div class="t b" style="left:552.0px;top:827.50px;font-size:13px;transform:scaleX(0.86);transform-origin:0 0;color:#fff">Top</div>
<svg class="a" style="left:596px;top:827px;" width="17" height="14" viewBox="0 0 17 14"><path d="M1,7 Q8.5,-1.5 16,7 Q8.5,15.5 1,7Z" fill="none" stroke="#fff" stroke-width="1.8"/><circle cx="8.5" cy="7" r="2.5" fill="#fff"/><path d="M2,1 L15,13" stroke="#00325f" stroke-width="3.5"/><path d="M2,1 L15,13" stroke="#fff" stroke-width="1.8"/></svg>
<div class="t b" style="left:614.0px;top:827.50px;font-size:13px;transform:scaleX(0.86);transform-origin:0 0;color:#fff">Hide Details</div>
<svg class="a" style="left:703px;top:827px;" width="13" height="13" viewBox="0 0 13 13"><circle cx="6.5" cy="6.5" r="6.3" fill="#fff"/><path d="M6.5,3 V8.5 M3.8,6.5 L6.5,9.5 L9.2,6.5" stroke="#00325f" stroke-width="2" fill="none"/></svg>
<div class="t b" style="left:717.5px;top:827.50px;font-size:13px;transform:scaleX(0.86);transform-origin:0 0;color:#fff">Download as CSV</div>
<div class="a" style="left:1317px;top:821px;width:55px;height:26px;background:#fff"></div>
<div class="a" style="left:1373px;top:821px;width:97px;height:26px;background:#fff"></div>
<div class="a" style="left:1471px;top:821px;width:70px;height:26px;background:#fff"></div>
<svg class="a" style="left:1324px;top:829px;" width="9" height="9" viewBox="0 0 9 9"><path d="M1,1 L8,8 M8,1 L1,8" stroke="#00325f" stroke-width="2.2"/></svg>
<div class="t " style="left:1336.0px;top:827.50px;font-size:13px;transform:scaleX(0.885);transform-origin:0 0;color:#00325f">Clear</div>
<svg class="a" style="left:1381px;top:828px;" width="13" height="12" viewBox="0 0 13 12"><circle cx="1.5" cy="1.5" r="1.4" fill="#00325f"/><circle cx="1.5" cy="6" r="1.4" fill="#00325f"/><circle cx="1.5" cy="10.5" r="1.4" fill="#00325f"/><path d="M4.5,1.5 H13 M4.5,6 H13 M4.5,10.5 H13" stroke="#00325f" stroke-width="1.7"/></svg>
<div class="t " style="left:1396.5px;top:827.50px;font-size:13px;transform:scaleX(0.88);transform-origin:0 0;color:#00325f">Select Killed</div>
<svg class="a" style="left:1479px;top:827px;" width="16" height="14" viewBox="0 0 16 14"><circle cx="6" cy="3.5" r="3.3" fill="#00325f"/><path d="M0,13.5 Q0,8 5.5,8 Q8,8 9,8.5 V13.5Z" fill="#00325f"/><path d="M10,8 L13,7 L16,8 Q16,12 13,14 Q10,12 10,8Z" fill="#00325f"/></svg>
<div class="t " style="left:1497.5px;top:827.50px;font-size:13px;transform:scaleX(0.89);transform-origin:0 0;color:#00325f">Permit</div>
<svg class="a" style="left:1553px;top:827px;" width="20" height="13" viewBox="0 0 20 13"><rect x="0.5" y="0.5" width="19" height="12" rx="6" fill="#fff"/><circle cx="13.5" cy="6.5" r="4.3" fill="#00325f"/></svg>
<div class="t b" style="left:1575.0px;top:827.50px;font-size:13px;transform:scaleX(0.855);transform-origin:0 0;color:#fff">Row Permit Selecting</div>
<div class="t b" style="left:3.5px;top:870.86px;font-size:16px;transform:scaleX(0.97);transform-origin:0 0;color:#0d2b4e">Client IP</div>
<div class="t b" style="left:105.8px;top:870.86px;font-size:16px;transform:scaleX(0.97);transform-origin:0 0;color:#0d2b4e">Client Hostname</div>
<div class="t b" style="left:273.8px;top:870.86px;font-size:16px;transform:scaleX(0.97);transform-origin:0 0;color:#0d2b4e">Server IP</div>
<div class="t b" style="left:381.3px;top:870.86px;font-size:16px;transform:scaleX(0.97);transform-origin:0 0;color:#0d2b4e">Server Hostname</div>
<div class="t b" style="left:759.5px;top:870.86px;font-size:16px;transform:scaleX(0.97);transform-origin:0 0;color:#0d2b4e">Port</div>
<div class="t b" style="left:828.0px;top:870.86px;font-size:16px;transform:scaleX(0.97);transform-origin:0 0;color:#0d2b4e">Port Desc</div>
<div class="t b" style="left:939.5px;top:870.86px;font-size:16px;transform:scaleX(0.97);transform-origin:0 0;color:#0d2b4e">Kill Reason</div>
<div class="t b" style="left:1148.6px;top:870.86px;font-size:16px;transform:scaleX(0.97);transform-origin:0 0;color:#0d2b4e">First Seen</div>
<div class="t b" style="left:1273.8px;top:870.86px;font-size:16px;transform:scaleX(0.97);transform-origin:0 0;color:#0d2b4e">Last Seen</div>
<div class="t b" style="left:1399.0px;top:870.86px;font-size:16px;transform:scaleX(0.97);transform-origin:0 0;color:#0d2b4e">Loc</div>
<div class="t b" style="left:1461.9px;top:870.86px;font-size:16px;transform:scaleX(0.97);transform-origin:0 0;color:#0d2b4e">Status</div>
<div class="t b" style="left:1546.7px;top:870.86px;font-size:16px;transform:scaleX(0.97);transform-origin:0 0;color:#0d2b4e">Type</div>
<div class="t b" style="left:1621.4px;top:870.86px;font-size:16px;transform:scaleX(0.97);transform-origin:0 0;color:#0d2b4e">VLAN</div>
<svg class="a" style="left:80px;top:859px;" width="14" height="11" viewBox="0 0 14 11"><path d="M3,10.5 V1 M0.8,3.2 L3,1 L5.2,3.2" stroke="#222" stroke-width="1.1" fill="none"/><path d="M10,0 V9.5 M7.8,7.3 L10,9.5 L12.2,7.3" stroke="#b9c3cc" stroke-width="1.1" fill="none"/></svg>
<svg class="a" style="left:248px;top:859px;" width="14" height="11" viewBox="0 0 14 11"><path d="M3,10.5 V1 M0.8,3.2 L3,1 L5.2,3.2" stroke="#b9c3cc" stroke-width="1.1" fill="none"/><path d="M10,0 V9.5 M7.8,7.3 L10,9.5 L12.2,7.3" stroke="#b9c3cc" stroke-width="1.1" fill="none"/></svg>
<svg class="a" style="left:356px;top:859px;" width="14" height="11" viewBox="0 0 14 11"><path d="M3,10.5 V1 M0.8,3.2 L3,1 L5.2,3.2" stroke="#b9c3cc" stroke-width="1.1" fill="none"/><path d="M10,0 V9.5 M7.8,7.3 L10,9.5 L12.2,7.3" stroke="#b9c3cc" stroke-width="1.1" fill="none"/></svg>
<svg class="a" style="left:733px;top:859px;" width="14" height="11" viewBox="0 0 14 11"><path d="M3,10.5 V1 M0.8,3.2 L3,1 L5.2,3.2" stroke="#b9c3cc" stroke-width="1.1" fill="none"/><path d="M10,0 V9.5 M7.8,7.3 L10,9.5 L12.2,7.3" stroke="#b9c3cc" stroke-width="1.1" fill="none"/></svg>
<svg class="a" style="left:802px;top:859px;" width="14" height="11" viewBox="0 0 14 11"><path d="M3,10.5 V1 M0.8,3.2 L3,1 L5.2,3.2" stroke="#b9c3cc" stroke-width="1.1" fill="none"/><path d="M10,0 V9.5 M7.8,7.3 L10,9.5 L12.2,7.3" stroke="#b9c3cc" stroke-width="1.1" fill="none"/></svg>
<svg class="a" style="left:914px;top:859px;" width="14" height="11" viewBox="0 0 14 11"><path d="M3,10.5 V1 M0.8,3.2 L3,1 L5.2,3.2" stroke="#b9c3cc" stroke-width="1.1" fill="none"/><path d="M10,0 V9.5 M7.8,7.3 L10,9.5 L12.2,7.3" stroke="#b9c3cc" stroke-width="1.1" fill="none"/></svg>
<svg class="a" style="left:1124px;top:859px;" width="14" height="11" viewBox="0 0 14 11"><path d="M3,10.5 V1 M0.8,3.2 L3,1 L5.2,3.2" stroke="#b9c3cc" stroke-width="1.1" fill="none"/><path d="M10,0 V9.5 M7.8,7.3 L10,9.5 L12.2,7.3" stroke="#222" stroke-width="1.1" fill="none"/></svg>
<svg class="a" style="left:1249px;top:859px;" width="14" height="11" viewBox="0 0 14 11"><path d="M3,10.5 V1 M0.8,3.2 L3,1 L5.2,3.2" stroke="#b9c3cc" stroke-width="1.1" fill="none"/><path d="M10,0 V9.5 M7.8,7.3 L10,9.5 L12.2,7.3" stroke="#b9c3cc" stroke-width="1.1" fill="none"/></svg>
<svg class="a" style="left:1374px;top:859px;" width="14" height="11" viewBox="0 0 14 11"><path d="M3,10.5 V1 M0.8,3.2 L3,1 L5.2,3.2" stroke="#b9c3cc" stroke-width="1.1" fill="none"/><path d="M10,0 V9.5 M7.8,7.3 L10,9.5 L12.2,7.3" stroke="#222" stroke-width="1.1" fill="none"/></svg>
<svg class="a" style="left:1437px;top:859px;" width="14" height="11" viewBox="0 0 14 11"><path d="M3,10.5 V1 M0.8,3.2 L3,1 L5.2,3.2" stroke="#b9c3cc" stroke-width="1.1" fill="none"/><path d="M10,0 V9.5 M7.8,7.3 L10,9.5 L12.2,7.3" stroke="#b9c3cc" stroke-width="1.1" fill="none"/></svg>
<svg class="a" style="left:1521px;top:859px;" width="14" height="11" viewBox="0 0 14 11"><path d="M3,10.5 V1 M0.8,3.2 L3,1 L5.2,3.2" stroke="#222" stroke-width="1.1" fill="none"/><path d="M10,0 V9.5 M7.8,7.3 L10,9.5 L12.2,7.3" stroke="#b9c3cc" stroke-width="1.1" fill="none"/></svg>
<svg class="a" style="left:1595px;top:859px;" width="14" height="11" viewBox="0 0 14 11"><path d="M3,10.5 V1 M0.8,3.2 L3,1 L5.2,3.2" stroke="#b9c3cc" stroke-width="1.1" fill="none"/><path d="M10,0 V9.5 M7.8,7.3 L10,9.5 L12.2,7.3" stroke="#b9c3cc" stroke-width="1.1" fill="none"/></svg>
<svg class="a" style="left:1677px;top:859px;" width="14" height="11" viewBox="0 0 14 11"><path d="M3,10.5 V1 M0.8,3.2 L3,1 L5.2,3.2" stroke="#b9c3cc" stroke-width="1.1" fill="none"/><path d="M10,0 V9.5 M7.8,7.3 L10,9.5 L12.2,7.3" stroke="#b9c3cc" stroke-width="1.1" fill="none"/></svg>
<div class="a" style="left:0;top:886px;width:1701px;height:311.5px;overflow:hidden">
<div class="t b" style="left:3.5px;top:9.30px;font-size:13px;transform:scaleX(0.96);transform-origin:0 0;color:#dc2f3e">100.69.247.230</div>
<div class="t b" style="left:273.8px;top:9.30px;font-size:13px;transform:scaleX(0.96);transform-origin:0 0;color:#dc2f3e">35.211.168.6</div>
<div class="t b" style="left:381.3px;top:9.30px;font-size:13px;transform:scaleX(0.96);transform-origin:0 0;color:#dc2f3e">pool.sofia.iponweb.net</div>
<div class="t b" style="left:759.5px;top:9.30px;font-size:13px;transform:scaleX(0.96);transform-origin:0 0;color:#dc2f3e">53</div>
<div class="t b" style="left:828px;top:9.30px;font-size:13px;transform:scaleX(0.96);transform-origin:0 0;color:#dc2f3e">dns</div>
<div class="t b" style="left:939.5px;top:9.30px;font-size:13px;transform:scaleX(0.96);transform-origin:0 0;color:#dc2f3e">2 - Suspicious domain</div>
<div class="t b" style="left:1148.6px;top:9.30px;font-size:13px;transform:scaleX(0.96);transform-origin:0 0;color:#dc2f3e">2021-08-24 23:16:16</div>
<div class="t b" style="left:1273.8px;top:9.30px;font-size:13px;transform:scaleX(0.96);transform-origin:0 0;color:#dc2f3e">2021-08-24 23:16:16</div>
<div class="t b" style="left:1399px;top:9.30px;font-size:13px;transform:scaleX(0.96);transform-origin:0 0;color:#dc2f3e">US</div>
<div class="t b" style="left:1461.9px;top:9.30px;font-size:13px;transform:scaleX(0.96);transform-origin:0 0;color:#dc2f3e">Killed</div>
<div class="t b" style="left:1546.7px;top:9.30px;font-size:13px;transform:scaleX(0.96);transform-origin:0 0;color:#dc2f3e">DNS</div>
<div class="t b" style="left:3.5px;top:29.30px;font-size:13px;transform:scaleX(0.96);transform-origin:0 0;color:#dc2f3e">100.69.247.230</div>
<div class="t b" style="left:273.8px;top:29.30px;font-size:13px;transform:scaleX(0.96);transform-origin:0 0;color:#dc2f3e">35.211.168.6</div>
<div class="t b" style="left:381.3px;top:29.30px;font-size:13px;transform:scaleX(0.96);transform-origin:0 0;color:#dc2f3e">sofia.pool.iponweb.net</div>
<div class="t b" style="left:759.5px;top:29.30px;font-size:13px;transform:scaleX(0.96);transform-origin:0 0;color:#dc2f3e">53</div>
<div class="t b" style="left:828px;top:29.30px;font-size:13px;transform:scaleX(0.96);transform-origin:0 0;color:#dc2f3e">dns</div>
<div class="t b" style="left:939.5px;top:29.30px;font-size:13px;transform:scaleX(0.96);transform-origin:0 0;color:#dc2f3e">2 - Suspicious domain</div>
<div class="t b" style="left:1148.6px;top:29.30px;font-size:13px;transform:scaleX(0.96);transform-origin:0 0;color:#dc2f3e">2021-08-24 23:16:16</div>
<div class="t b" style="left:1273.8px;top:29.30px;font-size:13px;transform:scaleX(0.96);transform-origin:0 0;color:#dc2f3e">2021-08-24 23:16:16</div>
<div class="t b" style="left:1399px;top:29.30px;font-size:13px;transform:scaleX(0.96);transform-origin:0 0;color:#dc2f3e">US</div>
<div class="t b" style="left:1461.9px;top:29.30px;font-size:13px;transform:scaleX(0.96);transform-origin:0 0;color:#dc2f3e">Killed</div>
<div class="t b" style="left:1546.7px;top:29.30px;font-size:13px;transform:scaleX(0.96);transform-origin:0 0;color:#dc2f3e">DNS</div>
<div class="t b" style="left:3.5px;top:49.30px;font-size:13px;transform:scaleX(0.96);transform-origin:0 0;color:#dc2f3e">100.69.247.230</div>
<div class="t b" style="left:273.8px;top:49.30px;font-size:13px;transform:scaleX(0.96);transform-origin:0 0;color:#dc2f3e">50.57.31.206</div>
<div class="t b" style="left:381.3px;top:49.30px;font-size:13px;transform:scaleX(0.96);transform-origin:0 0;color:#dc2f3e">uipus.semasio.net</div>
<div class="t b" style="left:759.5px;top:49.30px;font-size:13px;transform:scaleX(0.96);transform-origin:0 0;color:#dc2f3e">443</div>
<div class="t b" style="left:828px;top:49.30px;font-size:13px;transform:scaleX(0.96);transform-origin:0 0;color:#dc2f3e">https</div>
<div class="t b" style="left:939.5px;top:49.30px;font-size:13px;transform:scaleX(0.96);transform-origin:0 0;color:#dc2f3e">1 - Advertising or tracking domain</div>
<div class="t b" style="left:1148.6px;top:49.30px;font-size:13px;transform:scaleX(0.96);transform-origin:0 0;color:#dc2f3e">2021-08-24 23:15:34</div>
<div class="t b" style="left:1273.8px;top:49.30px;font-size:13px;transform:scaleX(0.96);transform-origin:0 0;color:#dc2f3e">2021-08-24 23:15:37</div>
<div class="t b" style="left:1399px;top:49.30px;font-size:13px;transform:scaleX(0.96);transform-origin:0 0;color:#dc2f3e">US</div>
<div class="t b" style="left:1461.9px;top:49.30px;font-size:13px;transform:scaleX(0.96);transform-origin:0 0;color:#dc2f3e">Killed</div>
<div class="t b" style="left:1546.7px;top:49.30px;font-size:13px;transform:scaleX(0.96);transform-origin:0 0;color:#dc2f3e">TCP</div>
<div class="t b" style="left:3.5px;top:69.30px;font-size:13px;transform:scaleX(0.96);transform-origin:0 0;color:#dc2f3e">100.69.247.230</div>
<div class="t b" style="left:273.8px;top:69.30px;font-size:13px;transform:scaleX(0.96);transform-origin:0 0;color:#dc2f3e">54.85.189.129</div>
<div class="t b" style="left:381.3px;top:69.30px;font-size:13px;transform:scaleX(0.96);transform-origin:0 0;color:#dc2f3e">ads.samba.tv</div>
<div class="t b" style="left:759.5px;top:69.30px;font-size:13px;transform:scaleX(0.96);transform-origin:0 0;color:#dc2f3e">53</div>
<div class="t b" style="left:828px;top:69.30px;font-size:13px;transform:scaleX(0.96);transform-origin:0 0;color:#dc2f3e">dns</div>
<div class="t b" style="left:939.5px;top:69.30px;font-size:13px;transform:scaleX(0.96);transform-origin:0 0;color:#dc2f3e">1 - Advertising or tracking domain</div>
<div class="t b" style="left:1148.6px;top:69.30px;font-size:13px;transform:scaleX(0.96);transform-origin:0 0;color:#dc2f3e">2021-08-24 23:15:34</div>
<div class="t b" style="left:1273.8px;top:69.30px;font-size:13px;transform:scaleX(0.96);transform-origin:0 0;color:#dc2f3e">2021-08-24 23:15:34</div>
<div class="t b" style="left:1399px;top:69.30px;font-size:13px;transform:scaleX(0.96);transform-origin:0 0;color:#dc2f3e">US</div>
<div class="t b" style="left:1461.9px;top:69.30px;font-size:13px;transform:scaleX(0.96);transform-origin:0 0;color:#dc2f3e">Killed</div>
<div class="t b" style="left:1546.7px;top:69.30px;font-size:13px;transform:scaleX(0.96);transform-origin:0 0;color:#dc2f3e">DNS</div>
<div class="t b" style="left:3.5px;top:89.30px;font-size:13px;transform:scaleX(0.96);transform-origin:0 0;color:#dc2f3e">100.69.247.230</div>
<div class="t b" style="left:273.8px;top:89.30px;font-size:13px;transform:scaleX(0.96);transform-origin:0 0;color:#dc2f3e">52.86.239.241</div>
<div class="t b" style="left:381.3px;top:89.30px;font-size:13px;transform:scaleX(0.96);transform-origin:0 0;color:#dc2f3e">ads.samba.tv</div>
<div class="t b" style="left:759.5px;top:89.30px;font-size:13px;transform:scaleX(0.96);transform-origin:0 0;color:#dc2f3e">53</div>
<div class="t b" style="left:828px;top:89.30px;font-size:13px;transform:scaleX(0.96);transform-origin:0 0;color:#dc2f3e">dns</div>
<div class="t b" style="left:939.5px;top:89.30px;font-size:13px;transform:scaleX(0.96);transform-origin:0 0;color:#dc2f3e">1 - Advertising or tracking domain</div>
<div class="t b" style="left:1148.6px;top:89.30px;font-size:13px;transform:scaleX(0.96);transform-origin:0 0;color:#dc2f3e">2021-08-24 23:15:34</div>
<div class="t b" style="left:1273.8px;top:89.30px;font-size:13px;transform:scaleX(0.96);transform-origin:0 0;color:#dc2f3e">2021-08-24 23:15:34</div>
<div class="t b" style="left:1399px;top:89.30px;font-size:13px;transform:scaleX(0.96);transform-origin:0 0;color:#dc2f3e">US</div>
<div class="t b" style="left:1461.9px;top:89.30px;font-size:13px;transform:scaleX(0.96);transform-origin:0 0;color:#dc2f3e">Killed</div>
<div class="t b" style="left:1546.7px;top:89.30px;font-size:13px;transform:scaleX(0.96);transform-origin:0 0;color:#dc2f3e">DNS</div>
<div class="t b" style="left:3.5px;top:109.30px;font-size:13px;transform:scaleX(0.96);transform-origin:0 0;color:#dc2f3e">100.69.247.230</div>
<div class="t b" style="left:273.8px;top:109.30px;font-size:13px;transform:scaleX(0.96);transform-origin:0 0;color:#dc2f3e">34.192.56.19</div>
<div class="t b" style="left:381.3px;top:109.30px;font-size:13px;transform:scaleX(0.96);transform-origin:0 0;color:#dc2f3e">ads.samba.tv</div>
<div class="t b" style="left:759.5px;top:109.30px;font-size:13px;transform:scaleX(0.96);transform-origin:0 0;color:#dc2f3e">53</div>
<div class="t b" style="left:828px;top:109.30px;font-size:13px;transform:scaleX(0.96);transform-origin:0 0;color:#dc2f3e">dns</div>
<div class="t b" style="left:939.5px;top:109.30px;font-size:13px;transform:scaleX(0.96);transform-origin:0 0;color:#dc2f3e">1 - Advertising or tracking domain</div>
<div class="t b" style="left:1148.6px;top:109.30px;font-size:13px;transform:scaleX(0.96);transform-origin:0 0;color:#dc2f3e">2021-08-24 23:15:34</div>
<div class="t b" style="left:1273.8px;top:109.30px;font-size:13px;transform:scaleX(0.96);transform-origin:0 0;color:#dc2f3e">2021-08-24 23:15:34</div>
<div class="t b" style="left:1399px;top:109.30px;font-size:13px;transform:scaleX(0.96);transform-origin:0 0;color:#dc2f3e">US</div>
<div class="t b" style="left:1461.9px;top:109.30px;font-size:13px;transform:scaleX(0.96);transform-origin:0 0;color:#dc2f3e">Killed</div>
<div class="t b" style="left:1546.7px;top:109.30px;font-size:13px;transform:scaleX(0.96);transform-origin:0 0;color:#dc2f3e">DNS</div>
<div class="t b" style="left:3.5px;top:129.30px;font-size:13px;transform:scaleX(0.96);transform-origin:0 0;color:#dc2f3e">100.69.247.230</div>
<div class="t b" style="left:273.8px;top:129.30px;font-size:13px;transform:scaleX(0.96);transform-origin:0 0;color:#dc2f3e">34.231.184.117</div>
<div class="t b" style="left:381.3px;top:129.30px;font-size:13px;transform:scaleX(0.96);transform-origin:0 0;color:#dc2f3e">ads.samba.tv</div>
<div class="t b" style="left:759.5px;top:129.30px;font-size:13px;transform:scaleX(0.96);transform-origin:0 0;color:#dc2f3e">53</div>
<div class="t b" style="left:828px;top:129.30px;font-size:13px;transform:scaleX(0.96);transform-origin:0 0;color:#dc2f3e">dns</div>
<div class="t b" style="left:939.5px;top:129.30px;font-size:13px;transform:scaleX(0.96);transform-origin:0 0;color:#dc2f3e">1 - Advertising or tracking domain</div>
<div class="t b" style="left:1148.6px;top:129.30px;font-size:13px;transform:scaleX(0.96);transform-origin:0 0;color:#dc2f3e">2021-08-24 23:15:34</div>
<div class="t b" style="left:1273.8px;top:129.30px;font-size:13px;transform:scaleX(0.96);transform-origin:0 0;color:#dc2f3e">2021-08-24 23:15:34</div>
<div class="t b" style="left:1399px;top:129.30px;font-size:13px;transform:scaleX(0.96);transform-origin:0 0;color:#dc2f3e">US</div>
<div class="t b" style="left:1461.9px;top:129.30px;font-size:13px;transform:scaleX(0.96);transform-origin:0 0;color:#dc2f3e">Killed</div>
<div class="t b" style="left:1546.7px;top:129.30px;font-size:13px;transform:scaleX(0.96);transform-origin:0 0;color:#dc2f3e">DNS</div>
<div class="t b" style="left:3.5px;top:149.30px;font-size:13px;transform:scaleX(0.96);transform-origin:0 0;color:#dc2f3e">100.69.247.230</div>
<div class="t b" style="left:273.8px;top:149.30px;font-size:13px;transform:scaleX(0.96);transform-origin:0 0;color:#dc2f3e">151.101.2.132</div>
<div class="t b" style="left:381.3px;top:149.30px;font-size:13px;transform:scaleX(0.96);transform-origin:0 0;color:#dc2f3e">pi.ispot.tv</div>
<div class="t b" style="left:759.5px;top:149.30px;font-size:13px;transform:scaleX(0.96);transform-origin:0 0;color:#dc2f3e">443</div>
<div class="t b" style="left:828px;top:149.30px;font-size:13px;transform:scaleX(0.96);transform-origin:0 0;color:#dc2f3e">https</div>
<div class="t b" style="left:1148.6px;top:149.30px;font-size:13px;transform:scaleX(0.96);transform-origin:0 0;color:#dc2f3e">2021-08-24 23:15:34</div>
<div class="t b" style="left:1273.8px;top:149.30px;font-size:13px;transform:scaleX(0.96);transform-origin:0 0;color:#dc2f3e">2021-08-24 23:15:44</div>
<div class="t b" style="left:1399px;top:149.30px;font-size:13px;transform:scaleX(0.96);transform-origin:0 0;color:#dc2f3e">US</div>
<div class="t b" style="left:1461.9px;top:149.30px;font-size:13px;transform:scaleX(0.96);transform-origin:0 0;color:#dc2f3e">Killed</div>
<div class="t b" style="left:1546.7px;top:149.30px;font-size:13px;transform:scaleX(0.96);transform-origin:0 0;color:#dc2f3e">TCP</div>
<div class="t b" style="left:3.5px;top:169.30px;font-size:13px;transform:scaleX(0.96);transform-origin:0 0;color:#dc2f3e">100.69.247.230</div>
<div class="t b" style="left:273.8px;top:169.30px;font-size:13px;transform:scaleX(0.96);transform-origin:0 0;color:#dc2f3e">205.185.216.42</div>
<div class="t b" style="left:381.3px;top:169.30px;font-size:13px;transform:scaleX(0.96);transform-origin:0 0;color:#dc2f3e">tlu-fg-shim.trafficmanager.net</div>
<div class="t b" style="left:759.5px;top:169.30px;font-size:13px;transform:scaleX(0.96);transform-origin:0 0;color:#dc2f3e">443</div>
<div class="t b" style="left:828px;top:169.30px;font-size:13px;transform:scaleX(0.96);transform-origin:0 0;color:#dc2f3e">https</div>
<div class="t b" style="left:1148.6px;top:169.30px;font-size:13px;transform:scaleX(0.96);transform-origin:0 0;color:#dc2f3e">2021-08-24 23:14:31</div>
<div class="t b" style="left:1273.8px;top:169.30px;font-size:13px;transform:scaleX(0.96);transform-origin:0 0;color:#dc2f3e">2021-08-24 23:14:32</div>
<div class="t b" style="left:1399px;top:169.30px;font-size:13px;transform:scaleX(0.96);transform-origin:0 0;color:#dc2f3e">US</div>
<div class="t b" style="left:1461.9px;top:169.30px;font-size:13px;transform:scaleX(0.96);transform-origin:0 0;color:#dc2f3e">Killed</div>
<div class="t b" style="left:1546.7px;top:169.30px;font-size:13px;transform:scaleX(0.96);transform-origin:0 0;color:#dc2f3e">TCP</div>
<div class="t " style="left:3.5px;top:189.20px;font-size:13px;transform:scaleX(0.88);transform-origin:0 0;color:#212529">100.69.247.230</div>
<div class="t " style="left:273.8px;top:189.20px;font-size:13px;transform:scaleX(0.88);transform-origin:0 0;color:#212529">54.88.32.179</div>
<div class="t " style="left:381.3px;top:189.20px;font-size:13px;transform:scaleX(0.88);transform-origin:0 0;color:#212529">gateway.prod.us-east-1.forester.a2z.com</div>
<div class="t " style="left:759.5px;top:189.20px;font-size:13px;transform:scaleX(0.88);transform-origin:0 0;color:#212529">443</div>
<div class="t " style="left:828px;top:189.20px;font-size:13px;transform:scaleX(0.88);transform-origin:0 0;color:#212529">https</div>
<div class="t " style="left:1148.6px;top:189.20px;font-size:13px;transform:scaleX(0.88);transform-origin:0 0;color:#212529">2021-08-24 23:15:32</div>
<div class="t " style="left:1273.8px;top:189.20px;font-size:13px;transform:scaleX(0.88);transform-origin:0 0;color:#212529">2021-08-24 23:16:18</div>
<div class="t " style="left:1399px;top:189.20px;font-size:13px;transform:scaleX(0.88);transform-origin:0 0;color:#212529">US</div>
<div class="t " style="left:1461.9px;top:189.20px;font-size:13px;transform:scaleX(0.88);transform-origin:0 0;color:#212529">Passed</div>
<div class="t " style="left:1546.7px;top:189.20px;font-size:13px;transform:scaleX(0.88);transform-origin:0 0;color:#212529">TCP</div>
<div class="t " style="left:3.5px;top:209.20px;font-size:13px;transform:scaleX(0.88);transform-origin:0 0;color:#212529">100.69.247.230</div>
<div class="t " style="left:273.8px;top:209.20px;font-size:13px;transform:scaleX(0.88);transform-origin:0 0;color:#212529">54.149.241.156</div>
<div class="t " style="left:381.3px;top:209.20px;font-size:13px;transform:scaleX(0.88);transform-origin:0 0;color:#212529">dcs-edge-usw2-620097651.us-west-2.elb.amazonaws.com</div>
<div class="t " style="left:759.5px;top:209.20px;font-size:13px;transform:scaleX(0.88);transform-origin:0 0;color:#212529">443</div>
<div class="t " style="left:828px;top:209.20px;font-size:13px;transform:scaleX(0.88);transform-origin:0 0;color:#212529">https</div>
<div class="t " style="left:1148.6px;top:209.20px;font-size:13px;transform:scaleX(0.88);transform-origin:0 0;color:#212529">2021-08-24 23:16:17</div>
<div class="t " style="left:1273.8px;top:209.20px;font-size:13px;transform:scaleX(0.88);transform-origin:0 0;color:#212529">2021-08-24 23:16:17</div>
<div class="t " style="left:1399px;top:209.20px;font-size:13px;transform:scaleX(0.88);transform-origin:0 0;color:#212529">US</div>
<div class="t " style="left:1461.9px;top:209.20px;font-size:13px;transform:scaleX(0.88);transform-origin:0 0;color:#212529">Passed</div>
<div class="t " style="left:1546.7px;top:209.20px;font-size:13px;transform:scaleX(0.88);transform-origin:0 0;color:#212529">TCP</div>
<div class="t " style="left:3.5px;top:229.20px;font-size:13px;transform:scaleX(0.88);transform-origin:0 0;color:#212529">100.69.247.230</div>
<div class="t " style="left:273.8px;top:229.20px;font-size:13px;transform:scaleX(0.88);transform-origin:0 0;color:#212529">23.38.85.107</div>
<div class="t " style="left:381.3px;top:229.20px;font-size:13px;transform:scaleX(0.88);transform-origin:0 0;color:#212529">e11276.dscg.akamaiedge.net</div>
<div class="t " style="left:759.5px;top:229.20px;font-size:13px;transform:scaleX(0.88);transform-origin:0 0;color:#212529">443</div>
<div class="t " style="left:828px;top:229.20px;font-size:13px;transform:scaleX(0.88);transform-origin:0 0;color:#212529">https</div>
<div class="t " style="left:1148.6px;top:229.20px;font-size:13px;transform:scaleX(0.88);transform-origin:0 0;color:#212529">2021-08-24 23:16:07</div>
<div class="t " style="left:1273.8px;top:229.20px;font-size:13px;transform:scaleX(0.88);transform-origin:0 0;color:#212529">2021-08-24 23:16:17</div>
<div class="t " style="left:1399px;top:229.20px;font-size:13px;transform:scaleX(0.88);transform-origin:0 0;color:#212529">US</div>
<div class="t " style="left:1461.9px;top:229.20px;font-size:13px;transform:scaleX(0.88);transform-origin:0 0;color:#212529">Passed</div>
<div class="t " style="left:1546.7px;top:229.20px;font-size:13px;transform:scaleX(0.88);transform-origin:0 0;color:#212529">TCP</div>
<div class="t " style="left:3.5px;top:249.20px;font-size:13px;transform:scaleX(0.88);transform-origin:0 0;color:#212529">100.69.247.230</div>
<div class="t " style="left:273.8px;top:249.20px;font-size:13px;transform:scaleX(0.88);transform-origin:0 0;color:#212529">3.20.36.118</div>
<div class="t " style="left:381.3px;top:249.20px;font-size:13px;transform:scaleX(0.88);transform-origin:0 0;color:#212529">us-east-1.ecs.mb.moatads.com</div>
<div class="t " style="left:759.5px;top:249.20px;font-size:13px;transform:scaleX(0.88);transform-origin:0 0;color:#212529">443</div>
<div class="t " style="left:828px;top:249.20px;font-size:13px;transform:scaleX(0.88);transform-origin:0 0;color:#212529">https</div>
<div class="t " style="left:1148.6px;top:249.20px;font-size:13px;transform:scaleX(0.88);transform-origin:0 0;color:#212529">2021-08-24 23:16:17</div>
<div class="t " style="left:1273.8px;top:249.20px;font-size:13px;transform:scaleX(0.88);transform-origin:0 0;color:#212529">2021-08-24 23:16:17</div>
<div class="t " style="left:1399px;top:249.20px;font-size:13px;transform:scaleX(0.88);transform-origin:0 0;color:#212529">US</div>
<div class="t " style="left:1461.9px;top:249.20px;font-size:13px;transform:scaleX(0.88);transform-origin:0 0;color:#212529">Passed</div>
<div class="t " style="left:1546.7px;top:249.20px;font-size:13px;transform:scaleX(0.88);transform-origin:0 0;color:#212529">TCP</div>
<div class="t " style="left:3.5px;top:269.20px;font-size:13px;transform:scaleX(0.88);transform-origin:0 0;color:#212529">100.69.247.230</div>
<div class="t " style="left:273.8px;top:269.20px;font-size:13px;transform:scaleX(0.88);transform-origin:0 0;color:#212529">52.0.93.32</div>
<div class="t " style="left:381.3px;top:269.20px;font-size:13px;transform:scaleX(0.88);transform-origin:0 0;color:#212529">sw88.espn.com</div>
<div class="t " style="left:759.5px;top:269.20px;font-size:13px;transform:scaleX(0.88);transform-origin:0 0;color:#212529">443</div>
<div class="t " style="left:828px;top:269.20px;font-size:13px;transform:scaleX(0.88);transform-origin:0 0;color:#212529">https</div>
<div class="t " style="left:1148.6px;top:269.20px;font-size:13px;transform:scaleX(0.88);transform-origin:0 0;color:#212529">2021-08-24 23:16:08</div>
<div class="t " style="left:1273.8px;top:269.20px;font-size:13px;transform:scaleX(0.88);transform-origin:0 0;color:#212529">2021-08-24 23:16:17</div>
<div class="t " style="left:1399px;top:269.20px;font-size:13px;transform:scaleX(0.88);transform-origin:0 0;color:#212529">US</div>
<div class="t " style="left:1461.9px;top:269.20px;font-size:13px;transform:scaleX(0.88);transform-origin:0 0;color:#212529">Passed</div>
<div class="t " style="left:1546.7px;top:269.20px;font-size:13px;transform:scaleX(0.88);transform-origin:0 0;color:#212529">TCP</div>
<div class="t " style="left:3.5px;top:289.20px;font-size:13px;transform:scaleX(0.88);transform-origin:0 0;color:#212529">100.69.247.230</div>
<div class="t " style="left:273.8px;top:289.20px;font-size:13px;transform:scaleX(0.88);transform-origin:0 0;color:#212529">23.55.253.159</div>
<div class="t " style="left:381.3px;top:289.20px;font-size:13px;transform:scaleX(0.88);transform-origin:0 0;color:#212529">wildcard.moatads.com.edgekey.net</div>
<div class="t " style="left:759.5px;top:289.20px;font-size:13px;transform:scaleX(0.88);transform-origin:0 0;color:#212529">443</div>
<div class="t " style="left:828px;top:289.20px;font-size:13px;transform:scaleX(0.88);transform-origin:0 0;color:#212529">https</div>
<div class="t " style="left:1148.6px;top:289.20px;font-size:13px;transform:scaleX(0.88);transform-origin:0 0;color:#212529">2021-08-24 23:16:17</div>
<div class="t " style="left:1273.8px;top:289.20px;font-size:13px;transform:scaleX(0.88);transform-origin:0 0;color:#212529">2021-08-24 23:16:17</div>
<div class="t " style="left:1399px;top:289.20px;font-size:13px;transform:scaleX(0.88);transform-origin:0 0;color:#212529">US</div>
<div class="t " style="left:1461.9px;top:289.20px;font-size:13px;transform:scaleX(0.88);transform-origin:0 0;color:#212529">Passed</div>
<div class="t " style="left:1546.7px;top:289.20px;font-size:13px;transform:scaleX(0.88);transform-origin:0 0;color:#212529">TCP</div>
<div class="t " style="left:3.5px;top:309.20px;font-size:13px;transform:scaleX(0.88);transform-origin:0 0;color:#212529">100.69.247.230</div>
<div class="t " style="left:273.8px;top:309.20px;font-size:13px;transform:scaleX(0.88);transform-origin:0 0;color:#212529">34.211.181.204</div>
<div class="t " style="left:381.3px;top:309.20px;font-size:13px;transform:scaleX(0.88);transform-origin:0 0;color:#212529">ocsp.digicert.com</div>
<div class="t " style="left:759.5px;top:309.20px;font-size:13px;transform:scaleX(0.88);transform-origin:0 0;color:#212529">443</div>
<div class="t " style="left:828px;top:309.20px;font-size:13px;transform:scaleX(0.88);transform-origin:0 0;color:#212529">https</div>
<div class="t " style="left:1148.6px;top:309.20px;font-size:13px;transform:scaleX(0.88);transform-origin:0 0;color:#212529">2021-08-24 23:00:00</div>
<div class="t " style="left:1273.8px;top:309.20px;font-size:13px;transform:scaleX(0.88);transform-origin:0 0;color:#212529">2021-08-24 23:16:17</div>
<div class="t " style="left:1399px;top:309.20px;font-size:13px;transform:scaleX(0.88);transform-origin:0 0;color:#212529">US</div>
<div class="t " style="left:1461.9px;top:309.20px;font-size:13px;transform:scaleX(0.88);transform-origin:0 0;color:#212529">Passed</div>
<div class="t " style="left:1546.7px;top:309.20px;font-size:13px;transform:scaleX(0.88);transform-origin:0 0;color:#212529">TCP</div>
</div>
<div class="a" style="left:1701px;top:886px;width:17px;height:312px;background:#f5f1f5"></div>
<div class="a" style="left:1703px;top:903px;width:13px;height:43px;background:#c2c1c5"></div>
<svg class="a" style="left:1705px;top:890px;" width="9" height="6" viewBox="0 0 9 6"><path d="M0,5.5 L4.5,0.5 L9,5.5Z" fill="#a3a3a3"/></svg>
<svg class="a" style="left:1705px;top:1186px;" width="9" height="6" viewBox="0 0 9 6"><path d="M0,0.5 L4.5,5.5 L9,0.5Z" fill="#505050"/></svg>
<div class="t " style="left:10.5px;top:1215.86px;font-size:16px;color:#212529">Showing 1 to 100 of 247 entries</div>
<div class="a" style="left:737.5px;top:1200px;width:243px;height:38px;border:1px solid #dee2e6;border-radius:4px;background:#fff"></div>
<div class="a" style="left:821px;top:1200px;width:35px;height:38px;background:#6c757d"></div>
<div class="a" style="left:889px;top:1201px;width:1px;height:36px;background:#dee2e6"></div>
<div class="a" style="left:922px;top:1201px;width:1px;height:36px;background:#dee2e6"></div>
<div class="t " style="left:750.6px;top:1212.00px;font-size:15px;color:#6c757d">Previous</div>
<div class="t " style="left:834.0px;top:1212.00px;font-size:15px;color:#fff">1</div>
<div class="t " style="left:868.3px;top:1212.00px;font-size:15px;color:#6c757d">2</div>
<div class="t " style="left:901.7px;top:1212.00px;font-size:15px;color:#6c757d">3</div>
<div class="t " style="left:936.0px;top:1212.00px;font-size:15px;color:#6c757d">Next</div>
<div class="t " style="left:1543.5px;top:1205.88px;font-size:15.5px;color:#212529">Show</div>
<div class="a" style="left:1585px;top:1198px;width:70.5px;height:31px;border:1px solid #ced4da;border-radius:5px;background:#fff"></div>
<div class="t " style="left:1599.0px;top:1208.12px;font-size:12.5px;transform:scaleX(0.9);transform-origin:0 0;color:#495057">100</div>
<svg class="a" style="left:1635px;top:1208px;" width="8" height="10" viewBox="0 0 8 10"><path d="M0,4 L4,0 L8,4Z M0,6 L4,10 L8,6Z" fill="#343a40"/></svg>
<div class="t " style="left:1661.5px;top:1205.88px;font-size:15.5px;color:#212529">entries</div>
<div class="a" style="left:0px;top:1239px;width:1718px;height:33px;background:#fcf9fc"></div>
<div class="t " style="left:24.4px;top:1252.74px;font-size:12px;color:#6c757d;letter-spacing:0.08px">Copyright &copy;2021 Intrusion. All rights reserved.</div>
<div class="a" style="left:1493px;top:1240px;width:105px;height:31px;background:#2b3a67;border-left:2px solid #e8e000;border-right:2px solid #e8e000;border-top:1px solid #e8e000"></div>
<svg class="a" style="left:1497px;top:1243px;" width="15" height="15" viewBox="0 0 15 15"><circle cx="7.5" cy="7.5" r="7" fill="#db4437"/><path d="M7.5,7.5 L1.5,11 A7,7 0 0 0 13.5,11Z" fill="#0f9d58"/><path d="M7.5,7.5 L13.5,11 A7,7 0 0 0 7.5,0.5 Z" fill="#ffcd40"/><circle cx="7.5" cy="7.5" r="3.2" fill="#fff"/><circle cx="7.5" cy="7.5" r="2.4" fill="#4285f4"/></svg>
<div class="t " style="left:1514.0px;top:1250.84px;font-size:12px;transform:scaleX(0.92);transform-origin:0 0;color:#fff">Shield Dashbo...</div>
<div class="t b" style="left:1600.5px;top:1249.42px;font-size:12.5px;transform:scaleX(0.92);transform-origin:0 0;color:#1d3f73;letter-spacing:-0.1px">Terms of Service</div>
</body></html>
